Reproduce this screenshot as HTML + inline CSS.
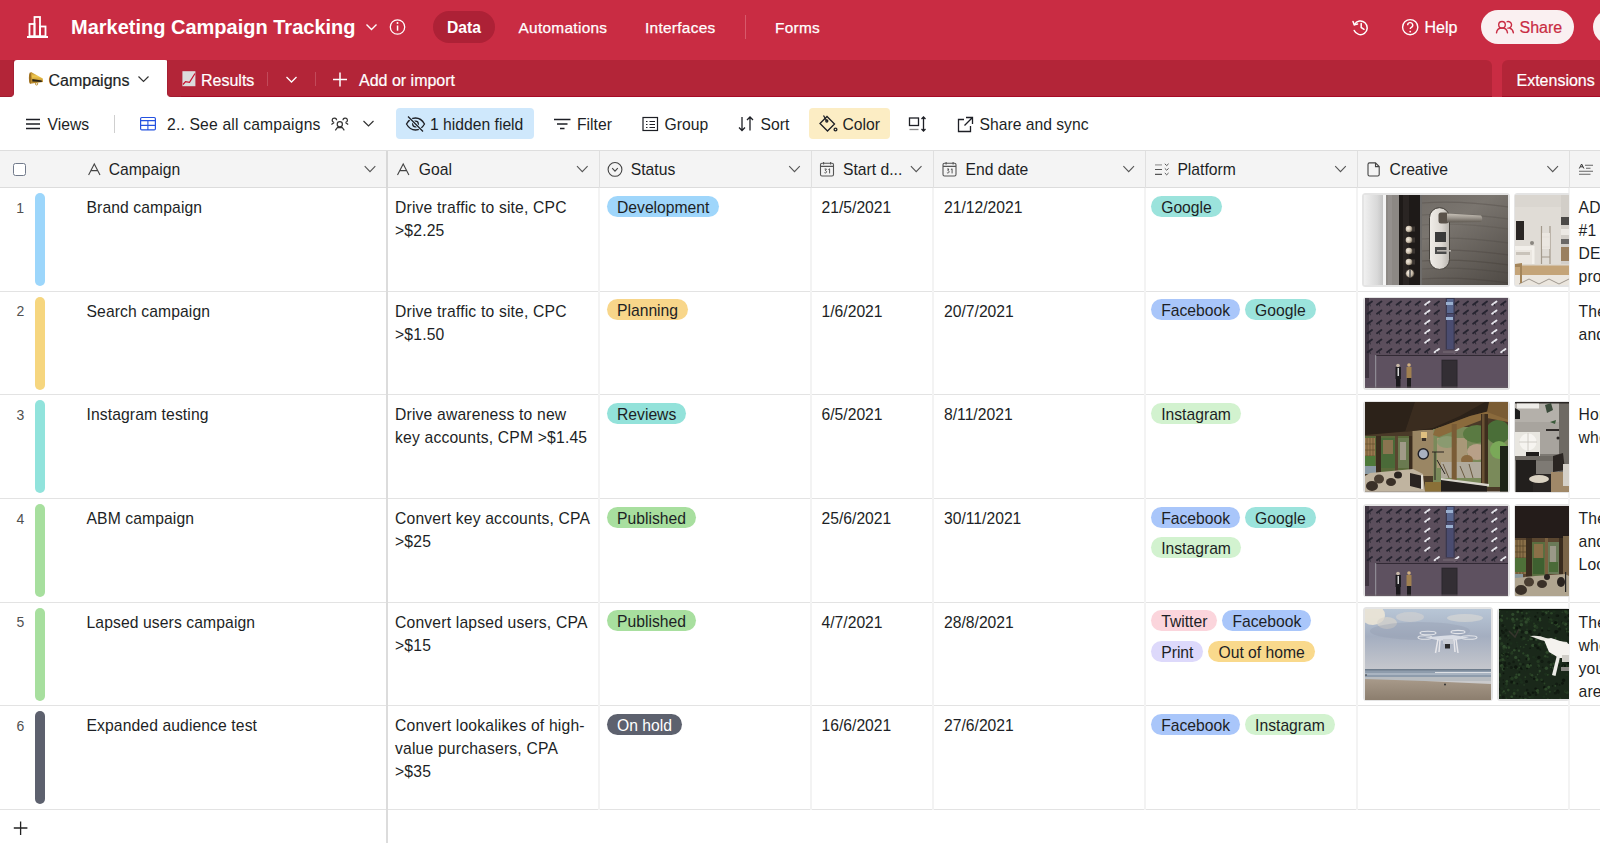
<!DOCTYPE html><html><head><meta charset="utf-8"><style>
*{margin:0;padding:0;box-sizing:border-box}
html,body{width:1600px;height:843px;overflow:hidden;background:#fff}
body{font-family:"Liberation Sans",sans-serif;color:#1d1f25;position:relative}
.t{position:absolute;white-space:nowrap}
.a{position:absolute}
svg{position:absolute;overflow:visible}
</style></head><body><div class="a" style="left:0;top:0;width:1600px;height:60px;background:#c92c43"></div><div class="a" style="left:0;top:60px;width:1600px;height:37px;background:#b32538;border-bottom:1px solid #a60a26"></div><div class="a" style="left:1492px;top:60px;width:10px;height:37px;background:#c92c43"></div><div class="a" style="left:1482px;top:60px;width:10px;height:10px;background:#c92c43"></div><div class="a" style="left:1482px;top:60px;width:10px;height:10px;background:#b32538;border-top-right-radius:6px"></div><div class="a" style="left:1502px;top:60px;width:10px;height:10px;background:#c92c43"></div><div class="a" style="left:1502px;top:60px;width:10px;height:10px;background:#b32538;border-top-left-radius:6px"></div><svg style="left:0;top:0" width="60" height="60"><g fill="none" stroke="#fff" stroke-width="1.8">
<rect x="29.5" y="24" width="5" height="12.2"/><rect x="34.5" y="17" width="5.5" height="19.2"/><rect x="40" y="26.5" width="5.5" height="9.7"/></g>
<rect x="27" y="36" width="21" height="2" fill="#fff"/></svg><div class="t" style="left:71px;top:15.57px;font-size:20px;line-height:23px;color:#fff;font-weight:bold;">Marketing Campaign Tracking</div><svg style="left:0;top:0" width="420" height="60"><polyline points="366.5,24.5 371.5,29.5 376.5,24.5" fill="none" stroke="#fff" stroke-width="1.4"/><circle cx="397.5" cy="27" r="7.2" fill="none" stroke="#fff" stroke-width="1.3"/><rect x="396.8" y="25.5" width="1.5" height="5.2" fill="#fff"/><circle cx="397.5" cy="23" r="1" fill="#fff"/></svg><div class="a" style="left:433px;top:11px;width:62px;height:32px;border-radius:16px;background:#ad2136"></div><div class="t" style="left:447px;top:15.76px;font-size:15.7px;line-height:23px;color:#fff;font-weight:bold;">Data</div><div class="t" style="left:518.5px;top:15.86px;font-size:15.4px;line-height:23px;color:#fff;-webkit-text-stroke:0.25px #fff;letter-spacing:0.3px;">Automations</div><div class="t" style="left:645px;top:15.86px;font-size:15.4px;line-height:23px;color:#fff;-webkit-text-stroke:0.25px #fff;letter-spacing:0.3px;">Interfaces</div><div class="a" style="left:745px;top:15px;width:1px;height:24px;background:#d8596b"></div><div class="t" style="left:775px;top:15.86px;font-size:15.4px;line-height:23px;color:#fff;-webkit-text-stroke:0.25px #fff;letter-spacing:0.3px;">Forms</div><svg style="left:0;top:0" width="1600" height="60"><g fill="none" stroke="#fff" stroke-width="1.5" stroke-linecap="round">
<path d="M1354.5,24.5 A6.8,6.8 0 1 1 1354.2,30.5"/><polyline points="1353,21.5 1354.3,24.8 1357.6,24"/><polyline points="1361.2,23.5 1361.2,27.5 1364,29.3"/></g>
<circle cx="1410.2" cy="27.2" r="7.6" fill="none" stroke="#fff" stroke-width="1.4"/>
<path d="M1407.7,25.2 a2.5,2.5 0 1 1 3.7,2.1 c-0.9,0.5 -1.2,1 -1.2,1.8" fill="none" stroke="#fff" stroke-width="1.4"/><circle cx="1410.2" cy="31.6" r="0.9" fill="#fff"/>
</svg><div class="t" style="left:1424.5px;top:16.36px;font-size:16px;line-height:23px;color:#fff;-webkit-text-stroke:0.2px #fff;">Help</div><div class="a" style="left:1481px;top:10px;width:93px;height:34px;border-radius:17px;background:#faf0f1"></div><svg style="left:0;top:0" width="1600" height="60"><g fill="none" stroke="#c92c43" stroke-width="1.4" stroke-linecap="round">
<circle cx="1502" cy="24.8" r="3.3"/><path d="M1496.5,32.8 c0.5,-3.5 2.6,-4.8 5.5,-4.8 s5,1.3 5.5,4.8"/>
<path d="M1507.2,21.7 a3.3,3.3 0 1 1 0.6,6.4"/><path d="M1510,28.4 c2,0.5 3,2 3.4,4.4"/></g></svg><div class="t" style="left:1519.5px;top:16.36px;font-size:16px;line-height:23px;color:#c92c43;-webkit-text-stroke:0.2px #c92c43;">Share</div><div class="a" style="left:1593px;top:10px;width:40px;height:34px;border-radius:17px;background:#faf0f1"></div><div class="a" style="left:14px;top:60px;width:154px;height:38px;background:#fff;border-radius:3px 3px 0 0"></div><div class="a" style="left:0;top:60px;width:14px;height:38px;background:#fff"></div><div class="a" style="left:0;top:60px;width:14px;height:37px;background:#b32538;border-bottom-right-radius:4px;border-bottom:1px solid #a01d31;border-right:1px solid #a51f33"></div><div class="a" style="left:167px;top:60px;width:14px;height:38px;background:#fff"></div><div class="a" style="left:167px;top:60px;width:14px;height:37px;background:#b32538;border-bottom-left-radius:4px;border-bottom:1px solid #a01d31;border-left:1px solid #a51f33"></div><svg style="left:0;top:60px" width="60" height="40">
<defs><linearGradient id="mg" x1="0" y1="0" x2="0" y2="1"><stop offset="0" stop-color="#b8862a"/><stop offset="0.35" stop-color="#f0c850"/><stop offset="1" stop-color="#b07e22"/></linearGradient></defs>
<path d="M31,12 L42.8,18.4 L43,22.1 L30,23.8 C28.6,20 28.8,15 31,12 Z" fill="url(#mg)"/>
<path d="M32.3,19 L41.8,20.4 L41.8,21.9 L32.3,21.6 Z" fill="#2a2418"/>
<ellipse cx="30.2" cy="18" rx="1.3" ry="5.8" fill="#a07020"/>
<circle cx="36.6" cy="23.9" r="1.15" fill="none" stroke="#b58a2a" stroke-width="0.9"/></svg><div class="t" style="left:48.5px;top:68.66px;font-size:16px;line-height:23px;-webkit-text-stroke:0.2px #1d1f25;">Campaigns</div><svg style="left:0;top:60px" width="200" height="40"><polyline points="138.5,16.5 143.5,21.5 148.5,16.5" fill="none" stroke="#333" stroke-width="1.2"/></svg><svg style="left:0;top:60px" width="400" height="40">
<rect x="182.4" y="11.2" width="13" height="15" fill="#dcdcdc"/>
<polyline points="183,24.5 185.5,21.6 189.5,22.4 195,13.5" fill="none" stroke="#c8102e" stroke-width="1.2"/></svg><div class="t" style="left:201px;top:68.66px;font-size:16px;line-height:23px;color:#fff;-webkit-text-stroke:0.2px #fff;">Results</div><div class="a" style="left:267px;top:72px;width:1px;height:14px;background:#c24a5a"></div><svg style="left:0;top:60px" width="400" height="40"><polyline points="286.5,17 291.5,22 296.5,17" fill="none" stroke="#fff" stroke-width="1.3"/></svg><div class="a" style="left:315px;top:72px;width:1px;height:14px;background:#c24a5a"></div><svg style="left:0;top:60px" width="400" height="40"><path d="M333,19.5 H347 M340,12.5 V26.5" stroke="#fff" stroke-width="1.5"/></svg><div class="t" style="left:359px;top:68.66px;font-size:16px;line-height:23px;color:#fff;-webkit-text-stroke:0.2px #fff;">Add or import</div><div class="t" style="left:1516.5px;top:68.66px;font-size:16px;line-height:23px;color:#fff;-webkit-text-stroke:0.2px #fff;">Extensions</div><div class="a" style="left:0;top:150px;width:1600px;height:1px;background:#dedede"></div><svg style="left:0;top:100px" width="1600" height="50" fill="none" stroke="#1d1f25" stroke-width="1.3">
<path d="M26,19.5 H40 M26,24 H40 M26,28.5 H40"/></svg><div class="t" style="left:47.5px;top:112.56px;font-size:15.7px;line-height:23px;">Views</div><div class="a" style="left:114px;top:115px;width:1px;height:18px;background:#cfcfcf"></div><svg style="left:0;top:100px" width="1600" height="50">
<rect x="140.6" y="17.5" width="14.8" height="12.4" rx="1.2" fill="none" stroke="#2552e0" stroke-width="1.2"/>
<path d="M140.6,20.6 H155.4 M140.6,25.4 H155.4 M147.9,20.6 V29.9" stroke="#2552e0" stroke-width="1.1"/></svg><div class="t" style="left:167px;top:112.56px;font-size:15.7px;line-height:23px;letter-spacing:0.17px;">2.. See all campaigns</div><svg style="left:0;top:100px" width="1600" height="50" fill="none" stroke="#333" stroke-width="1.2">
<circle cx="339.8" cy="24.3" r="2.6"/><path d="M337,27.6 H342.6 M337.3,27.6 L335.3,30.3 M342.3,27.6 L344.3,30.3"/>
<path d="M336.6,20.3 A2.2,2.2 0 1 0 334,22.4 M334.2,22.4 L331.4,24.5"/>
<path d="M343,20.3 A2.2,2.2 0 1 1 345.6,22.4 M345.4,22.4 L348.2,24.5"/>
<polyline points="363.5,21 368.5,26 373.5,21"/></svg><div class="a" style="left:396px;top:108px;width:138px;height:31px;border-radius:4px;background:#cfe8fc"></div><svg style="left:0;top:100px" width="1600" height="50" fill="none" stroke="#1d1f25" stroke-width="1.3">
<path d="M406.5,24 C409,19.5 412,18 415.5,18 S422,19.5 424.5,24 C422,28.5 419,30 415.5,30 S409,28.5 406.5,24 Z"/>
<circle cx="415.5" cy="24" r="2.8"/><path d="M408,16.5 L423,31.5" stroke="#cfe8fc" stroke-width="3"/><path d="M408,16.5 L423,31.5"/></svg><div class="t" style="left:430px;top:112.56px;font-size:15.7px;line-height:23px;">1 hidden field</div><svg style="left:0;top:100px" width="1600" height="50" fill="none" stroke="#1d1f25" stroke-width="1.3">
<path d="M554,19.5 H570.5 M557,24 H567.5 M560,28.5 H564.5"/></svg><div class="t" style="left:577px;top:112.56px;font-size:15.7px;line-height:23px;">Filter</div><svg style="left:0;top:100px" width="1600" height="50" fill="none" stroke="#1d1f25" stroke-width="1.2">
<rect x="643" y="17.5" width="14.5" height="13"/><path d="M646,21.5 H647.5 M649.5,21.5 H655 M646,24.5 H647.5 M649.5,24.5 H655 M646,27.5 H647.5 M649.5,27.5 H655"/></svg><div class="t" style="left:664.5px;top:112.56px;font-size:15.7px;line-height:23px;">Group</div><svg style="left:0;top:100px" width="1600" height="50" fill="none" stroke="#1d1f25" stroke-width="1.3">
<path d="M742,17 V30.5 M739,27.5 L742,30.5 L745,27.5 M750,30.5 V17 M747,20 L750,17 L753,20"/></svg><div class="t" style="left:760.5px;top:112.56px;font-size:15.7px;line-height:23px;">Sort</div><div class="a" style="left:809px;top:108px;width:80.5px;height:31px;border-radius:4px;background:#fcedc4"></div><svg style="left:0;top:100px" width="1600" height="50" fill="none" stroke="#1d1f25" stroke-width="1.3">
<path d="M820,23.5 L827,16.5 L834.5,24 L827.5,31 Z"/><path d="M823.5,15.5 L826.5,20.5"/><circle cx="826.8" cy="21" r="1"/><circle cx="835.5" cy="29.5" r="1.4"/></svg><div class="t" style="left:842.5px;top:112.56px;font-size:15.7px;line-height:23px;">Color</div><svg style="left:0;top:100px" width="1600" height="50" fill="none" stroke="#1d1f25" stroke-width="1.3">
<rect x="909.5" y="18" width="9" height="7.5"/><path d="M909.5,29.5 H918.5" stroke="#888"/><path d="M923.5,17 V31 M921.5,19 L923.5,17 L925.5,19 M921.5,29 L923.5,31 L925.5,29"/></svg><svg style="left:0;top:100px" width="1600" height="50" fill="none" stroke="#1d1f25" stroke-width="1.3">
<path d="M964,19.5 H958.5 V31.5 H970.5 V26"/><path d="M966,17.5 H972.5 V24 M972.5,17.5 L964.5,25.5"/></svg><div class="t" style="left:979.5px;top:112.56px;font-size:15.7px;line-height:23px;">Share and sync</div><div class="a" style="left:0;top:151px;width:1600px;height:36.5px;background:#f4f4f4;border-bottom:1px solid #dcdcdc"></div><div class="a" style="left:386px;top:151px;width:2px;height:37px;background:#d8d8d8"></div><div class="a" style="left:599px;top:151px;width:1px;height:37px;background:#e0e0e0"></div><div class="a" style="left:811px;top:151px;width:1px;height:37px;background:#e0e0e0"></div><div class="a" style="left:933px;top:151px;width:1px;height:37px;background:#e0e0e0"></div><div class="a" style="left:1145px;top:151px;width:1px;height:37px;background:#e0e0e0"></div><div class="a" style="left:1357px;top:151px;width:1px;height:37px;background:#e0e0e0"></div><div class="a" style="left:1569px;top:151px;width:1px;height:37px;background:#e0e0e0"></div><div class="a" style="left:13px;top:163px;width:13px;height:13px;border:1.2px solid #717a8b;border-radius:2.5px;background:#fff"></div><svg style="left:0;top:0" width="1600" height="200"><path d="M88.6,175 L94.3,164 L100.0,175 M90.89999999999999,170.6 H97.7" fill="none" stroke="#444" stroke-width="1.1"/><polyline points="364.7,166.2 370,171.6 375.3,166.2" fill="none" stroke="#555" stroke-width="1.1"/><path d="M397.5,175 L403.2,164 L408.9,175 M399.8,170.6 H406.59999999999997" fill="none" stroke="#444" stroke-width="1.1"/><polyline points="577.0,166.2 582.3,171.6 587.5999999999999,166.2" fill="none" stroke="#555" stroke-width="1.1"/><circle cx="615" cy="169.4" r="6.9" fill="none" stroke="#444" stroke-width="1.1"/><polyline points="612.2,168.1 615,171.2 617.8,168.1" fill="none" stroke="#444" stroke-width="1.1"/><polyline points="789.2,166.2 794.5,171.6 799.8,166.2" fill="none" stroke="#555" stroke-width="1.1"/><rect x="820.5" y="163.2" width="13" height="12.8" rx="1.5" fill="none" stroke="#555" stroke-width="1.1"/><path d="M820.5,166.4 H833.5 M823.6,162 V164.5 M830.6,162 V164.5" stroke="#555" stroke-width="1.1"/><path d="M824.6,169 h1.8 l-1,1.6 a1.2,1.2 0 1 1 -1,1.9 M828.4,169.6 l1.2,-0.8 v4.6" fill="none" stroke="#444" stroke-width="0.9"/><polyline points="910.9000000000001,166.2 916.2,171.6 921.5,166.2" fill="none" stroke="#555" stroke-width="1.1"/><rect x="943.0" y="163.2" width="13" height="12.8" rx="1.5" fill="none" stroke="#555" stroke-width="1.1"/><path d="M943.0,166.4 H956.0 M946.1,162 V164.5 M953.1,162 V164.5" stroke="#555" stroke-width="1.1"/><path d="M947.1,169 h1.8 l-1,1.6 a1.2,1.2 0 1 1 -1,1.9 M950.9,169.6 l1.2,-0.8 v4.6" fill="none" stroke="#444" stroke-width="0.9"/><polyline points="1123.4,166.2 1128.7,171.6 1134.0,166.2" fill="none" stroke="#555" stroke-width="1.1"/><path d="M1155,164.9 H1162" stroke="#999" stroke-width="1.2"/><path d="M1155,169.5 H1162 M1155,174.3 H1162" stroke="#555" stroke-width="1.2"/><polyline points="1164.8,163.8 1166.7,165.6 1168.6,163.8" fill="none" stroke="#555" stroke-width="1"/><polyline points="1164.8,168.4 1166.7,170.2 1168.6,168.4" fill="none" stroke="#555" stroke-width="1"/><polyline points="1164.8,173 1166.7,174.8 1168.6,173" fill="none" stroke="#555" stroke-width="1"/><polyline points="1335.2,166.2 1340.5,171.6 1345.8,166.2" fill="none" stroke="#555" stroke-width="1.1"/><path d="M1369.5,162.9 H1375.5 L1379.2,166.6 V174.5 a1.5,1.5 0 0 1 -1.5,1.5 H1369.5 a1.5,1.5 0 0 1 -1.5,-1.5 V164.4 a1.5,1.5 0 0 1 1.5,-1.5 Z M1375.5,162.9 V166.6 H1379.2" fill="none" stroke="#444" stroke-width="1.1"/><polyline points="1547.4,166.2 1552.7,171.6 1558.0,166.2" fill="none" stroke="#555" stroke-width="1.1"/><path d="M1585,165.3 H1593 M1586,168.3 H1590.5 M1579,171.3 H1593 M1579,174.3 H1590.5" stroke="#666" stroke-width="1.1"/><path d="M1579.3,168.5 L1581.6,164 L1583.9,168.5 M1580.3,166.8 H1583" fill="none" stroke="#333" stroke-width="1"/></svg><div class="t" style="left:108.75px;top:158.06px;font-size:15.7px;line-height:23px;">Campaign</div><div class="t" style="left:418.75px;top:158.06px;font-size:15.7px;line-height:23px;">Goal</div><div class="t" style="left:630.75px;top:158.06px;font-size:15.7px;line-height:23px;">Status</div><div class="t" style="left:843px;top:158.06px;font-size:15.7px;line-height:23px;">Start d...</div><div class="t" style="left:965.5px;top:158.06px;font-size:15.7px;line-height:23px;">End date</div><div class="t" style="left:1177.4px;top:158.06px;font-size:15.7px;line-height:23px;">Platform</div><div class="t" style="left:1389.6px;top:158.06px;font-size:15.7px;line-height:23px;">Creative</div><div class="a" style="left:0;top:290.67px;width:1600px;height:1px;background:#e3e3e3"></div><div class="t" style="left:16.3px;top:196.75px;font-size:14px;line-height:23px;color:#505050;">1</div><div class="a" style="left:35.2px;top:193.10px;width:9.7px;height:92.87px;border-radius:5px;background:#9cd6fb"></div><div class="t" style="left:86.5px;top:195.96px;font-size:15.7px;line-height:23px;letter-spacing:0.1px;">Brand campaign</div><div class="t" style="left:395px;top:195.96px;font-size:15.7px;line-height:23px;letter-spacing:0.18px;">Drive traffic to site, CPC</div><div class="t" style="left:395px;top:218.96px;font-size:15.7px;line-height:23px;letter-spacing:0.18px;">&gt;$2.25</div><div class="t" style="left:607px;top:195.80px;height:21px;line-height:23px;padding:0 10px;border-radius:10.5px;background:#9fd6fb;color:#1d1f25;font-size:15.7px">Development</div><div class="t" style="left:821.5px;top:195.96px;font-size:15.7px;line-height:23px;">21/5/2021</div><div class="t" style="left:944px;top:195.96px;font-size:15.7px;line-height:23px;">21/12/2021</div><div class="t" style="left:1151.2px;top:195.80px;font-size:15.7px;display:flex"><div style="height:21px;line-height:23px;padding:0 10px;border-radius:10.5px;background:#9be3dc;margin-right:5px">Google</div></div><div class="t" style="left:1578.5px;top:195.96px;font-size:15.7px;line-height:23px;letter-spacing:0.2px;">ADVANCED</div><div class="t" style="left:1578.5px;top:218.96px;font-size:15.7px;line-height:23px;letter-spacing:0.2px;">#1 IN</div><div class="t" style="left:1578.5px;top:241.96px;font-size:15.7px;line-height:23px;letter-spacing:0.2px;">DESIGN</div><div class="t" style="left:1578.5px;top:264.96px;font-size:15.7px;line-height:23px;letter-spacing:0.2px;">protection</div><div class="a" style="left:0;top:394.33px;width:1600px;height:1px;background:#e3e3e3"></div><div class="t" style="left:16.5px;top:300.42px;font-size:14px;line-height:23px;color:#505050;">2</div><div class="a" style="left:35.2px;top:296.77px;width:9.7px;height:92.87px;border-radius:5px;background:#f6d67f"></div><div class="t" style="left:86.5px;top:299.63px;font-size:15.7px;line-height:23px;letter-spacing:0.1px;">Search campaign</div><div class="t" style="left:395px;top:299.63px;font-size:15.7px;line-height:23px;letter-spacing:0.18px;">Drive traffic to site, CPC</div><div class="t" style="left:395px;top:322.63px;font-size:15.7px;line-height:23px;letter-spacing:0.18px;">&gt;$1.50</div><div class="t" style="left:607px;top:299.47px;height:21px;line-height:23px;padding:0 10px;border-radius:10.5px;background:#f8d68a;color:#1d1f25;font-size:15.7px">Planning</div><div class="t" style="left:821.5px;top:299.63px;font-size:15.7px;line-height:23px;">1/6/2021</div><div class="t" style="left:944px;top:299.63px;font-size:15.7px;line-height:23px;">20/7/2021</div><div class="t" style="left:1151.2px;top:299.47px;font-size:15.7px;display:flex"><div style="height:21px;line-height:23px;padding:0 10px;border-radius:10.5px;background:#a9c6fa;margin-right:5px">Facebook</div><div style="height:21px;line-height:23px;padding:0 10px;border-radius:10.5px;background:#9be3dc;margin-right:5px">Google</div></div><div class="t" style="left:1578.5px;top:299.63px;font-size:15.7px;line-height:23px;letter-spacing:0.2px;">The</div><div class="t" style="left:1578.5px;top:322.63px;font-size:15.7px;line-height:23px;letter-spacing:0.2px;">and</div><div class="a" style="left:0;top:498.00px;width:1600px;height:1px;background:#e3e3e3"></div><div class="t" style="left:16.5px;top:404.08px;font-size:14px;line-height:23px;color:#505050;">3</div><div class="a" style="left:35.2px;top:400.43px;width:9.7px;height:92.87px;border-radius:5px;background:#91e3dc"></div><div class="t" style="left:86.5px;top:403.29px;font-size:15.7px;line-height:23px;letter-spacing:0.1px;">Instagram testing</div><div class="t" style="left:395px;top:403.29px;font-size:15.7px;line-height:23px;letter-spacing:0.18px;">Drive awareness to new</div><div class="t" style="left:395px;top:426.29px;font-size:15.7px;line-height:23px;letter-spacing:0.18px;">key accounts, CPM &gt;$1.45</div><div class="t" style="left:607px;top:403.13px;height:21px;line-height:23px;padding:0 10px;border-radius:10.5px;background:#93e2da;color:#1d1f25;font-size:15.7px">Reviews</div><div class="t" style="left:821.5px;top:403.29px;font-size:15.7px;line-height:23px;">6/5/2021</div><div class="t" style="left:944px;top:403.29px;font-size:15.7px;line-height:23px;">8/11/2021</div><div class="t" style="left:1151.2px;top:403.13px;font-size:15.7px;display:flex"><div style="height:21px;line-height:23px;padding:0 10px;border-radius:10.5px;background:#d2f2cf;margin-right:5px">Instagram</div></div><div class="t" style="left:1578.5px;top:403.29px;font-size:15.7px;line-height:23px;letter-spacing:0.2px;">Hon</div><div class="t" style="left:1578.5px;top:426.29px;font-size:15.7px;line-height:23px;letter-spacing:0.2px;">whe</div><div class="a" style="left:0;top:601.67px;width:1600px;height:1px;background:#e3e3e3"></div><div class="t" style="left:16.5px;top:507.75px;font-size:14px;line-height:23px;color:#505050;">4</div><div class="a" style="left:35.2px;top:504.10px;width:9.7px;height:92.87px;border-radius:5px;background:#a7df9e"></div><div class="t" style="left:86.5px;top:506.96px;font-size:15.7px;line-height:23px;letter-spacing:0.1px;">ABM campaign</div><div class="t" style="left:395px;top:506.96px;font-size:15.7px;line-height:23px;letter-spacing:0.18px;">Convert key accounts, CPA</div><div class="t" style="left:395px;top:529.96px;font-size:15.7px;line-height:23px;letter-spacing:0.18px;">&gt;$25</div><div class="t" style="left:607px;top:506.80px;height:21px;line-height:23px;padding:0 10px;border-radius:10.5px;background:#a8df9f;color:#1d1f25;font-size:15.7px">Published</div><div class="t" style="left:821.5px;top:506.96px;font-size:15.7px;line-height:23px;">25/6/2021</div><div class="t" style="left:944px;top:506.96px;font-size:15.7px;line-height:23px;">30/11/2021</div><div class="t" style="left:1151.2px;top:506.80px;font-size:15.7px;display:flex"><div style="height:21px;line-height:23px;padding:0 10px;border-radius:10.5px;background:#a9c6fa;margin-right:5px">Facebook</div><div style="height:21px;line-height:23px;padding:0 10px;border-radius:10.5px;background:#9be3dc;margin-right:5px">Google</div></div><div class="t" style="left:1151.2px;top:537.30px;font-size:15.7px;display:flex"><div style="height:21px;line-height:23px;padding:0 10px;border-radius:10.5px;background:#d2f2cf;margin-right:5px">Instagram</div></div><div class="t" style="left:1578.5px;top:506.96px;font-size:15.7px;line-height:23px;letter-spacing:0.2px;">The</div><div class="t" style="left:1578.5px;top:529.96px;font-size:15.7px;line-height:23px;letter-spacing:0.2px;">and</div><div class="t" style="left:1578.5px;top:552.96px;font-size:15.7px;line-height:23px;letter-spacing:0.2px;">Loo</div><div class="a" style="left:0;top:705.34px;width:1600px;height:1px;background:#e3e3e3"></div><div class="t" style="left:16.5px;top:611.42px;font-size:14px;line-height:23px;color:#505050;">5</div><div class="a" style="left:35.2px;top:607.77px;width:9.7px;height:92.87px;border-radius:5px;background:#a7df9e"></div><div class="t" style="left:86.5px;top:610.63px;font-size:15.7px;line-height:23px;letter-spacing:0.1px;">Lapsed users campaign</div><div class="t" style="left:395px;top:610.63px;font-size:15.7px;line-height:23px;letter-spacing:0.18px;">Convert lapsed users, CPA</div><div class="t" style="left:395px;top:633.63px;font-size:15.7px;line-height:23px;letter-spacing:0.18px;">&gt;$15</div><div class="t" style="left:607px;top:610.47px;height:21px;line-height:23px;padding:0 10px;border-radius:10.5px;background:#a8df9f;color:#1d1f25;font-size:15.7px">Published</div><div class="t" style="left:821.5px;top:610.63px;font-size:15.7px;line-height:23px;">4/7/2021</div><div class="t" style="left:944px;top:610.63px;font-size:15.7px;line-height:23px;">28/8/2021</div><div class="t" style="left:1151.2px;top:610.47px;font-size:15.7px;display:flex"><div style="height:21px;line-height:23px;padding:0 10px;border-radius:10.5px;background:#fbd5dc;margin-right:5px">Twitter</div><div style="height:21px;line-height:23px;padding:0 10px;border-radius:10.5px;background:#a9c6fa;margin-right:5px">Facebook</div></div><div class="t" style="left:1151.2px;top:640.97px;font-size:15.7px;display:flex"><div style="height:21px;line-height:23px;padding:0 10px;border-radius:10.5px;background:#ddd9fb;margin-right:5px">Print</div><div style="height:21px;line-height:23px;padding:0 10px;border-radius:10.5px;background:#f9d98c;margin-right:5px">Out of home</div></div><div class="t" style="left:1578.5px;top:610.63px;font-size:15.7px;line-height:23px;letter-spacing:0.2px;">The</div><div class="t" style="left:1578.5px;top:633.63px;font-size:15.7px;line-height:23px;letter-spacing:0.2px;">whe</div><div class="t" style="left:1578.5px;top:656.63px;font-size:15.7px;line-height:23px;letter-spacing:0.2px;">you</div><div class="t" style="left:1578.5px;top:679.63px;font-size:15.7px;line-height:23px;letter-spacing:0.2px;">are</div><div class="a" style="left:0;top:809.00px;width:1600px;height:1px;background:#e3e3e3"></div><div class="t" style="left:16.5px;top:715.08px;font-size:14px;line-height:23px;color:#505050;">6</div><div class="a" style="left:35.2px;top:711.44px;width:9.7px;height:92.87px;border-radius:5px;background:#5d616e"></div><div class="t" style="left:86.5px;top:714.29px;font-size:15.7px;line-height:23px;letter-spacing:0.1px;">Expanded audience test</div><div class="t" style="left:395px;top:714.29px;font-size:15.7px;line-height:23px;letter-spacing:0.18px;">Convert lookalikes of high-</div><div class="t" style="left:395px;top:737.29px;font-size:15.7px;line-height:23px;letter-spacing:0.18px;">value purchasers, CPA</div><div class="t" style="left:395px;top:760.29px;font-size:15.7px;line-height:23px;letter-spacing:0.18px;">&gt;$35</div><div class="t" style="left:607px;top:714.13px;height:21px;line-height:23px;padding:0 10px;border-radius:10.5px;background:#5d616e;color:#fff;font-size:15.7px">On hold</div><div class="t" style="left:821.5px;top:714.29px;font-size:15.7px;line-height:23px;">16/6/2021</div><div class="t" style="left:944px;top:714.29px;font-size:15.7px;line-height:23px;">27/6/2021</div><div class="t" style="left:1151.2px;top:714.13px;font-size:15.7px;display:flex"><div style="height:21px;line-height:23px;padding:0 10px;border-radius:10.5px;background:#a9c6fa;margin-right:5px">Facebook</div><div style="height:21px;line-height:23px;padding:0 10px;border-radius:10.5px;background:#d2f2cf;margin-right:5px">Instagram</div></div><div class="a" style="left:386px;top:188px;width:2px;height:655px;background:#dcdcdc"></div><div class="a" style="left:598px;top:188px;width:2px;height:621.50px;background:#f3f3f3"></div><div class="a" style="left:810px;top:188px;width:2px;height:621.50px;background:#f3f3f3"></div><div class="a" style="left:932px;top:188px;width:2px;height:621.50px;background:#f3f3f3"></div><div class="a" style="left:1144px;top:188px;width:2px;height:621.50px;background:#f3f3f3"></div><div class="a" style="left:1356px;top:188px;width:2px;height:621.50px;background:#f3f3f3"></div><div class="a" style="left:1568px;top:188px;width:2px;height:621.50px;background:#f3f3f3"></div><div class="a" style="left:0;top:0;width:1569px;height:843px;overflow:hidden"><div class="a" style="left:1362.00px;top:193.00px;width:147.50px;height:93.50px;border-radius:3.5px;background:#e4e4e4"></div><svg style="left:1363.50px;top:194.50px;overflow:hidden" width="144.50" height="90.50" viewBox="0 0 144.50 90.50" preserveAspectRatio="none"><defs><linearGradient id="dg1" x1="0" x2="1"><stop offset="0" stop-color="#f0f0f0"/><stop offset="0.7" stop-color="#d8d8d8"/><stop offset="1" stop-color="#c4c4c4"/></linearGradient><linearGradient id="dg2" x1="0" y1="0" x2="1" y2="1"><stop offset="0" stop-color="#6a6560"/><stop offset="0.45" stop-color="#7a756f"/><stop offset="1" stop-color="#4e4944"/></linearGradient><radialGradient id="bolt" cx="0.35" cy="0.4" r="0.7"><stop offset="0" stop-color="#f4ece0"/><stop offset="0.6" stop-color="#c8bcaa"/><stop offset="1" stop-color="#6a6050"/></radialGradient><linearGradient id="plate" x1="0" x2="1"><stop offset="0" stop-color="#f0ede8"/><stop offset="0.6" stop-color="#dcd8d2"/><stop offset="1" stop-color="#b8b4ae"/></linearGradient><linearGradient id="lever" x1="0" y1="0" x2="0" y2="1"><stop offset="0" stop-color="#c8c2b8"/><stop offset="0.5" stop-color="#9a948c"/><stop offset="1" stop-color="#5e5850"/></linearGradient></defs><rect x="0" y="0" width="144.5" height="90.5" fill="url(#dg2)"/><rect x="0" y="0" width="19" height="90.5" fill="url(#dg1)"/><rect x="19" y="0" width="3" height="90.5" fill="#f4f4f4"/><rect x="22" y="0" width="13" height="90.5" fill="#8c8884"/><rect x="24" y="0" width="4" height="90.5" fill="#9a9692" opacity="0.6"/><rect x="35" y="0" width="21" height="90.5" fill="#1e1a18"/><rect x="39" y="0" width="6" height="90.5" fill="#2a2523"/><rect x="56" y="0" width="2" height="90.5" fill="#6e6c6a"/><path d="M58,8 Q95,5 144.5,12" stroke="#3a3530" stroke-width="1.2" fill="none" opacity="0.25"/><path d="M58,20 Q95,17 144.5,24" stroke="#3a3530" stroke-width="1.2" fill="none" opacity="0.2"/><path d="M58,30 Q95,27 144.5,34" stroke="#3a3530" stroke-width="1.2" fill="none" opacity="0.15"/><path d="M58,44 Q95,41 144.5,48" stroke="#3a3530" stroke-width="1.2" fill="none" opacity="0.2"/><path d="M58,56 Q95,53 144.5,60" stroke="#3a3530" stroke-width="1.2" fill="none" opacity="0.25"/><path d="M58,66 Q95,63 144.5,70" stroke="#3a3530" stroke-width="1.2" fill="none" opacity="0.3"/><path d="M58,74 Q95,71 144.5,78" stroke="#3a3530" stroke-width="1.2" fill="none" opacity="0.2"/><path d="M58,84 Q95,81 144.5,88" stroke="#3a3530" stroke-width="1.2" fill="none" opacity="0.25"/><rect x="45" y="31.5" width="6" height="5" fill="#3a3430"/><circle cx="45" cy="34" r="3.3" fill="url(#bolt)"/><rect x="45" y="42.5" width="6" height="5" fill="#3a3430"/><circle cx="45" cy="45" r="3.3" fill="url(#bolt)"/><rect x="45" y="53.5" width="6" height="5" fill="#3a3430"/><circle cx="45" cy="56" r="3.3" fill="url(#bolt)"/><rect x="45" y="64.5" width="6" height="5" fill="#3a3430"/><circle cx="45" cy="67" r="3.3" fill="url(#bolt)"/><circle cx="46" cy="78.5" r="4.3" fill="url(#bolt)" stroke="#2a2420" stroke-width="0.6"/><rect x="45.2" y="74.8" width="1.6" height="7.5" fill="#555"/><rect x="65.5" y="12.7" width="20" height="61.7" rx="10" fill="url(#plate)" stroke="#3a3530" stroke-width="0.9"/><rect x="71" y="37" width="11" height="10" fill="#3a3a3a"/><rect x="71" y="52" width="11.5" height="7" fill="#4a4a4a"/><rect x="73" y="55" width="14" height="1.6" fill="#b8b4ae"/><rect x="74.5" y="17.5" width="10" height="11" rx="2.5" fill="#5a524a"/><path d="M83,18.5 L117,20.5 Q119.5,23.5 117,27 L83,27.5 Z" fill="url(#lever)"/></svg><div class="a" style="left:1513.50px;top:193.00px;width:57.00px;height:93.50px;border-radius:3.5px;background:#e4e4e4"></div><svg style="left:1515.00px;top:194.50px;overflow:hidden" width="54.00" height="90.50" viewBox="0 0 54.00 90.50" preserveAspectRatio="none"><rect width="54" height="90.5" fill="#e0dcd6"/><rect x="0" y="0" width="54" height="12" fill="#dad6d0"/><rect x="46" y="0" width="8" height="72" fill="#d2cec8"/><rect x="46" y="22" width="8" height="8" fill="#4a4846"/><rect x="46" y="34" width="8" height="6" fill="#ece9e4"/><rect x="46" y="44" width="8" height="5" fill="#6a6866"/><rect x="46" y="52" width="8" height="14" fill="#9a8060"/><rect x="1" y="26" width="8" height="19" fill="#2a2624"/><rect x="0" y="51" width="19" height="4" fill="#f2efea"/><rect x="0" y="55" width="18" height="14" fill="#ebe7e1"/><rect x="1" y="57" width="14" height="3" fill="#c9c3ba"/><rect x="17" y="51" width="2.5" height="28" fill="#f4f1ec"/><circle cx="17" cy="48" r="2" fill="#8a8680"/><path d="M26.5,31 V76 M35,31 V76 M26.5,42 H35 M26.5,52 H35 M26.5,62 H35 M26.5,71 H35" stroke="#a39a8c" stroke-width="1.2"/><rect x="27" y="38" width="8" height="16" fill="#ece8e2" opacity="0.9"/><rect x="0" y="70" width="54" height="11" fill="#c4a478"/><rect x="0" y="69" width="54" height="1.5" fill="#ddd8cf"/><rect x="0" y="80" width="54" height="10.5" fill="#ebe6de"/><path d="M4,89 L14,84 L24,89 L34,84 L44,89 L54,84" stroke="#7e766c" stroke-width="0.7" fill="none"/><path d="M0,69 L7,68 L7,88 L5,88 L5,72 L0,72 Z" fill="#a4855a"/></svg><div class="a" style="left:1363.00px;top:296.70px;width:146.50px;height:93.30px;border-radius:3.5px;background:#e4e4e4"></div><svg style="left:1364.50px;top:298.20px;overflow:hidden" width="143.50" height="90.30" viewBox="0 0 143.50 90.30" preserveAspectRatio="none"><rect width="143.5" height="90.5" fill="#5e5160"/><rect x="0" y="0" width="143.5" height="57" fill="#5b4e5c"/><rect x="0" y="0" width="4" height="80" fill="#3e3440"/><path d="M2.6,6.8 L7,3.5" stroke="#262430" stroke-width="1.9" stroke-linecap="round"/><path d="M4.7,5.8 L5.4,8.3" stroke="#2a2832" stroke-width="0.9"/><path d="M2.6,15.7 L7,12.399999999999999" stroke="#262430" stroke-width="1.9" stroke-linecap="round"/><path d="M4.7,14.7 L5.4,17.2" stroke="#2a2832" stroke-width="0.9"/><path d="M2.6,25.8 L7,22.5" stroke="#262430" stroke-width="1.9" stroke-linecap="round"/><path d="M4.7,24.8 L5.4,27.3" stroke="#2a2832" stroke-width="0.9"/><path d="M2.6,35.3 L7,31.999999999999996" stroke="#262430" stroke-width="1.9" stroke-linecap="round"/><path d="M4.7,34.3 L5.4,36.8" stroke="#2a2832" stroke-width="0.9"/><path d="M2.6,44.8 L7,41.5" stroke="#262430" stroke-width="1.9" stroke-linecap="round"/><path d="M4.7,43.8 L5.4,46.3" stroke="#2a2832" stroke-width="0.9"/><path d="M2.6,54.3 L7,51.0" stroke="#262430" stroke-width="1.9" stroke-linecap="round"/><path d="M4.7,53.3 L5.4,55.8" stroke="#2a2832" stroke-width="0.9"/><path d="M12.0,6.8 L16.4,3.5" stroke="#262430" stroke-width="1.9" stroke-linecap="round"/><path d="M14.1,5.8 L14.8,8.3" stroke="#2a2832" stroke-width="0.9"/><path d="M12.0,15.7 L16.4,12.399999999999999" stroke="#262430" stroke-width="1.9" stroke-linecap="round"/><path d="M14.1,14.7 L14.8,17.2" stroke="#2a2832" stroke-width="0.9"/><path d="M12.0,25.8 L16.4,22.5" stroke="#262430" stroke-width="1.9" stroke-linecap="round"/><path d="M14.1,24.8 L14.8,27.3" stroke="#2a2832" stroke-width="0.9"/><path d="M12.0,35.3 L16.4,31.999999999999996" stroke="#262430" stroke-width="1.9" stroke-linecap="round"/><path d="M14.1,34.3 L14.8,36.8" stroke="#2a2832" stroke-width="0.9"/><path d="M12.0,44.8 L16.4,41.5" stroke="#262430" stroke-width="1.9" stroke-linecap="round"/><path d="M14.1,43.8 L14.8,46.3" stroke="#2a2832" stroke-width="0.9"/><path d="M12.0,54.3 L16.4,51.0" stroke="#262430" stroke-width="1.9" stroke-linecap="round"/><path d="M14.1,53.3 L14.8,55.8" stroke="#2a2832" stroke-width="0.9"/><path d="M22.1,6.8 L26.5,3.5" stroke="#262430" stroke-width="1.9" stroke-linecap="round"/><path d="M24.2,5.8 L24.9,8.3" stroke="#2a2832" stroke-width="0.9"/><path d="M22.1,15.7 L26.5,12.399999999999999" stroke="#262430" stroke-width="1.9" stroke-linecap="round"/><path d="M24.2,14.7 L24.9,17.2" stroke="#2a2832" stroke-width="0.9"/><path d="M22.1,25.8 L26.5,22.5" stroke="#262430" stroke-width="1.9" stroke-linecap="round"/><path d="M24.2,24.8 L24.9,27.3" stroke="#2a2832" stroke-width="0.9"/><path d="M22.1,35.3 L26.5,31.999999999999996" stroke="#262430" stroke-width="1.9" stroke-linecap="round"/><path d="M24.2,34.3 L24.9,36.8" stroke="#2a2832" stroke-width="0.9"/><path d="M22.1,44.8 L26.5,41.5" stroke="#262430" stroke-width="1.9" stroke-linecap="round"/><path d="M24.2,43.8 L24.9,46.3" stroke="#2a2832" stroke-width="0.9"/><path d="M22.1,54.3 L26.5,51.0" stroke="#262430" stroke-width="1.9" stroke-linecap="round"/><path d="M24.2,53.3 L24.9,55.8" stroke="#2a2832" stroke-width="0.9"/><path d="M31.6,6.8 L36,3.5" stroke="#262430" stroke-width="1.9" stroke-linecap="round"/><path d="M33.7,5.8 L34.4,8.3" stroke="#2a2832" stroke-width="0.9"/><path d="M31.6,15.7 L36,12.399999999999999" stroke="#262430" stroke-width="1.9" stroke-linecap="round"/><path d="M33.7,14.7 L34.4,17.2" stroke="#2a2832" stroke-width="0.9"/><path d="M31.6,25.8 L36,22.5" stroke="#262430" stroke-width="1.9" stroke-linecap="round"/><path d="M33.7,24.8 L34.4,27.3" stroke="#2a2832" stroke-width="0.9"/><path d="M31.6,35.3 L36,31.999999999999996" stroke="#262430" stroke-width="1.9" stroke-linecap="round"/><path d="M33.7,34.3 L34.4,36.8" stroke="#2a2832" stroke-width="0.9"/><path d="M31.6,44.8 L36,41.5" stroke="#262430" stroke-width="1.9" stroke-linecap="round"/><path d="M33.7,43.8 L34.4,46.3" stroke="#2a2832" stroke-width="0.9"/><path d="M31.6,54.3 L36,51.0" stroke="#262430" stroke-width="1.9" stroke-linecap="round"/><path d="M33.7,53.3 L34.4,55.8" stroke="#2a2832" stroke-width="0.9"/><path d="M41.1,6.8 L45.5,3.5" stroke="#262430" stroke-width="1.9" stroke-linecap="round"/><path d="M43.2,5.8 L43.9,8.3" stroke="#2a2832" stroke-width="0.9"/><path d="M41.1,15.7 L45.5,12.399999999999999" stroke="#262430" stroke-width="1.9" stroke-linecap="round"/><path d="M43.2,14.7 L43.9,17.2" stroke="#2a2832" stroke-width="0.9"/><path d="M41.1,25.8 L45.5,22.5" stroke="#262430" stroke-width="1.9" stroke-linecap="round"/><path d="M43.2,24.8 L43.9,27.3" stroke="#2a2832" stroke-width="0.9"/><path d="M41.1,35.3 L45.5,31.999999999999996" stroke="#262430" stroke-width="1.9" stroke-linecap="round"/><path d="M43.2,34.3 L43.9,36.8" stroke="#2a2832" stroke-width="0.9"/><path d="M41.1,44.8 L45.5,41.5" stroke="#262430" stroke-width="1.9" stroke-linecap="round"/><path d="M43.2,43.8 L43.9,46.3" stroke="#2a2832" stroke-width="0.9"/><path d="M41.1,54.3 L45.5,51.0" stroke="#262430" stroke-width="1.9" stroke-linecap="round"/><path d="M43.2,53.3 L43.9,55.8" stroke="#2a2832" stroke-width="0.9"/><path d="M50.6,6.8 L55,3.5" stroke="#262430" stroke-width="1.9" stroke-linecap="round"/><path d="M52.7,5.8 L53.4,8.3" stroke="#2a2832" stroke-width="0.9"/><path d="M50.6,15.7 L55,12.399999999999999" stroke="#262430" stroke-width="1.9" stroke-linecap="round"/><path d="M52.7,14.7 L53.4,17.2" stroke="#2a2832" stroke-width="0.9"/><path d="M50.6,25.8 L55,22.5" stroke="#262430" stroke-width="1.9" stroke-linecap="round"/><path d="M52.7,24.8 L53.4,27.3" stroke="#2a2832" stroke-width="0.9"/><path d="M50.6,35.3 L55,31.999999999999996" stroke="#262430" stroke-width="1.9" stroke-linecap="round"/><path d="M52.7,34.3 L53.4,36.8" stroke="#2a2832" stroke-width="0.9"/><path d="M50.6,44.8 L55,41.5" stroke="#262430" stroke-width="1.9" stroke-linecap="round"/><path d="M52.7,43.8 L53.4,46.3" stroke="#2a2832" stroke-width="0.9"/><path d="M50.6,54.3 L55,51.0" stroke="#262430" stroke-width="1.9" stroke-linecap="round"/><path d="M52.7,53.3 L53.4,55.8" stroke="#2a2832" stroke-width="0.9"/><path d="M60.1,6.8 L64.5,3.5" stroke="#e8e8ee" stroke-width="1.9" stroke-linecap="round"/><path d="M62.2,5.8 L62.9,8.3" stroke="#2a2832" stroke-width="0.9"/><path d="M60.1,15.7 L64.5,12.399999999999999" stroke="#e8e8ee" stroke-width="1.9" stroke-linecap="round"/><path d="M62.2,14.7 L62.9,17.2" stroke="#2a2832" stroke-width="0.9"/><path d="M60.1,25.8 L64.5,22.5" stroke="#e8e8ee" stroke-width="1.9" stroke-linecap="round"/><path d="M62.2,24.8 L62.9,27.3" stroke="#2a2832" stroke-width="0.9"/><path d="M60.1,35.3 L64.5,31.999999999999996" stroke="#e8e8ee" stroke-width="1.9" stroke-linecap="round"/><path d="M62.2,34.3 L62.9,36.8" stroke="#2a2832" stroke-width="0.9"/><path d="M60.1,44.8 L64.5,41.5" stroke="#e8e8ee" stroke-width="1.9" stroke-linecap="round"/><path d="M62.2,43.8 L62.9,46.3" stroke="#2a2832" stroke-width="0.9"/><path d="M60.1,54.3 L64.5,51.0" stroke="#262430" stroke-width="1.9" stroke-linecap="round"/><path d="M62.2,53.3 L62.9,55.8" stroke="#2a2832" stroke-width="0.9"/><path d="M69.6,6.8 L74,3.5" stroke="#262430" stroke-width="1.9" stroke-linecap="round"/><path d="M71.7,5.8 L72.4,8.3" stroke="#2a2832" stroke-width="0.9"/><path d="M69.6,15.7 L74,12.399999999999999" stroke="#262430" stroke-width="1.9" stroke-linecap="round"/><path d="M71.7,14.7 L72.4,17.2" stroke="#2a2832" stroke-width="0.9"/><path d="M69.6,25.8 L74,22.5" stroke="#262430" stroke-width="1.9" stroke-linecap="round"/><path d="M71.7,24.8 L72.4,27.3" stroke="#2a2832" stroke-width="0.9"/><path d="M69.6,35.3 L74,31.999999999999996" stroke="#262430" stroke-width="1.9" stroke-linecap="round"/><path d="M71.7,34.3 L72.4,36.8" stroke="#2a2832" stroke-width="0.9"/><path d="M69.6,44.8 L74,41.5" stroke="#262430" stroke-width="1.9" stroke-linecap="round"/><path d="M71.7,43.8 L72.4,46.3" stroke="#2a2832" stroke-width="0.9"/><path d="M69.6,54.3 L74,51.0" stroke="#e8e8ee" stroke-width="1.9" stroke-linecap="round"/><path d="M71.7,53.3 L72.4,55.8" stroke="#2a2832" stroke-width="0.9"/><path d="M89.1,6.8 L93.5,3.5" stroke="#262430" stroke-width="1.9" stroke-linecap="round"/><path d="M91.2,5.8 L91.9,8.3" stroke="#2a2832" stroke-width="0.9"/><path d="M89.1,15.7 L93.5,12.399999999999999" stroke="#262430" stroke-width="1.9" stroke-linecap="round"/><path d="M91.2,14.7 L91.9,17.2" stroke="#2a2832" stroke-width="0.9"/><path d="M89.1,25.8 L93.5,22.5" stroke="#262430" stroke-width="1.9" stroke-linecap="round"/><path d="M91.2,24.8 L91.9,27.3" stroke="#2a2832" stroke-width="0.9"/><path d="M89.1,35.3 L93.5,31.999999999999996" stroke="#262430" stroke-width="1.9" stroke-linecap="round"/><path d="M91.2,34.3 L91.9,36.8" stroke="#2a2832" stroke-width="0.9"/><path d="M89.1,44.8 L93.5,41.5" stroke="#262430" stroke-width="1.9" stroke-linecap="round"/><path d="M91.2,43.8 L91.9,46.3" stroke="#2a2832" stroke-width="0.9"/><path d="M89.1,54.3 L93.5,51.0" stroke="#e8e8ee" stroke-width="1.9" stroke-linecap="round"/><path d="M91.2,53.3 L91.9,55.8" stroke="#2a2832" stroke-width="0.9"/><path d="M98.6,6.8 L103,3.5" stroke="#262430" stroke-width="1.9" stroke-linecap="round"/><path d="M100.7,5.8 L101.4,8.3" stroke="#2a2832" stroke-width="0.9"/><path d="M98.6,15.7 L103,12.399999999999999" stroke="#262430" stroke-width="1.9" stroke-linecap="round"/><path d="M100.7,14.7 L101.4,17.2" stroke="#2a2832" stroke-width="0.9"/><path d="M98.6,25.8 L103,22.5" stroke="#262430" stroke-width="1.9" stroke-linecap="round"/><path d="M100.7,24.8 L101.4,27.3" stroke="#2a2832" stroke-width="0.9"/><path d="M98.6,35.3 L103,31.999999999999996" stroke="#262430" stroke-width="1.9" stroke-linecap="round"/><path d="M100.7,34.3 L101.4,36.8" stroke="#2a2832" stroke-width="0.9"/><path d="M98.6,44.8 L103,41.5" stroke="#262430" stroke-width="1.9" stroke-linecap="round"/><path d="M100.7,43.8 L101.4,46.3" stroke="#2a2832" stroke-width="0.9"/><path d="M98.6,54.3 L103,51.0" stroke="#262430" stroke-width="1.9" stroke-linecap="round"/><path d="M100.7,53.3 L101.4,55.8" stroke="#2a2832" stroke-width="0.9"/><path d="M108.1,6.8 L112.5,3.5" stroke="#262430" stroke-width="1.9" stroke-linecap="round"/><path d="M110.2,5.8 L110.9,8.3" stroke="#2a2832" stroke-width="0.9"/><path d="M108.1,15.7 L112.5,12.399999999999999" stroke="#262430" stroke-width="1.9" stroke-linecap="round"/><path d="M110.2,14.7 L110.9,17.2" stroke="#2a2832" stroke-width="0.9"/><path d="M108.1,25.8 L112.5,22.5" stroke="#262430" stroke-width="1.9" stroke-linecap="round"/><path d="M110.2,24.8 L110.9,27.3" stroke="#2a2832" stroke-width="0.9"/><path d="M108.1,35.3 L112.5,31.999999999999996" stroke="#262430" stroke-width="1.9" stroke-linecap="round"/><path d="M110.2,34.3 L110.9,36.8" stroke="#2a2832" stroke-width="0.9"/><path d="M108.1,44.8 L112.5,41.5" stroke="#262430" stroke-width="1.9" stroke-linecap="round"/><path d="M110.2,43.8 L110.9,46.3" stroke="#2a2832" stroke-width="0.9"/><path d="M108.1,54.3 L112.5,51.0" stroke="#262430" stroke-width="1.9" stroke-linecap="round"/><path d="M110.2,53.3 L110.9,55.8" stroke="#2a2832" stroke-width="0.9"/><path d="M117.6,6.8 L122,3.5" stroke="#262430" stroke-width="1.9" stroke-linecap="round"/><path d="M119.7,5.8 L120.4,8.3" stroke="#2a2832" stroke-width="0.9"/><path d="M117.6,15.7 L122,12.399999999999999" stroke="#262430" stroke-width="1.9" stroke-linecap="round"/><path d="M119.7,14.7 L120.4,17.2" stroke="#2a2832" stroke-width="0.9"/><path d="M117.6,25.8 L122,22.5" stroke="#262430" stroke-width="1.9" stroke-linecap="round"/><path d="M119.7,24.8 L120.4,27.3" stroke="#2a2832" stroke-width="0.9"/><path d="M117.6,35.3 L122,31.999999999999996" stroke="#262430" stroke-width="1.9" stroke-linecap="round"/><path d="M119.7,34.3 L120.4,36.8" stroke="#2a2832" stroke-width="0.9"/><path d="M117.6,44.8 L122,41.5" stroke="#262430" stroke-width="1.9" stroke-linecap="round"/><path d="M119.7,43.8 L120.4,46.3" stroke="#2a2832" stroke-width="0.9"/><path d="M117.6,54.3 L122,51.0" stroke="#262430" stroke-width="1.9" stroke-linecap="round"/><path d="M119.7,53.3 L120.4,55.8" stroke="#2a2832" stroke-width="0.9"/><path d="M127.1,6.8 L131.5,3.5" stroke="#e8e8ee" stroke-width="1.9" stroke-linecap="round"/><path d="M129.2,5.8 L129.9,8.3" stroke="#2a2832" stroke-width="0.9"/><path d="M127.1,15.7 L131.5,12.399999999999999" stroke="#e8e8ee" stroke-width="1.9" stroke-linecap="round"/><path d="M129.2,14.7 L129.9,17.2" stroke="#2a2832" stroke-width="0.9"/><path d="M127.1,25.8 L131.5,22.5" stroke="#e8e8ee" stroke-width="1.9" stroke-linecap="round"/><path d="M129.2,24.8 L129.9,27.3" stroke="#2a2832" stroke-width="0.9"/><path d="M127.1,35.3 L131.5,31.999999999999996" stroke="#e8e8ee" stroke-width="1.9" stroke-linecap="round"/><path d="M129.2,34.3 L129.9,36.8" stroke="#2a2832" stroke-width="0.9"/><path d="M127.1,44.8 L131.5,41.5" stroke="#e8e8ee" stroke-width="1.9" stroke-linecap="round"/><path d="M129.2,43.8 L129.9,46.3" stroke="#2a2832" stroke-width="0.9"/><path d="M127.1,54.3 L131.5,51.0" stroke="#262430" stroke-width="1.9" stroke-linecap="round"/><path d="M129.2,53.3 L129.9,55.8" stroke="#2a2832" stroke-width="0.9"/><path d="M136.1,6.8 L140.5,3.5" stroke="#262430" stroke-width="1.9" stroke-linecap="round"/><path d="M138.2,5.8 L138.9,8.3" stroke="#2a2832" stroke-width="0.9"/><path d="M136.1,15.7 L140.5,12.399999999999999" stroke="#262430" stroke-width="1.9" stroke-linecap="round"/><path d="M138.2,14.7 L138.9,17.2" stroke="#2a2832" stroke-width="0.9"/><path d="M136.1,25.8 L140.5,22.5" stroke="#262430" stroke-width="1.9" stroke-linecap="round"/><path d="M138.2,24.8 L138.9,27.3" stroke="#2a2832" stroke-width="0.9"/><path d="M136.1,35.3 L140.5,31.999999999999996" stroke="#262430" stroke-width="1.9" stroke-linecap="round"/><path d="M138.2,34.3 L138.9,36.8" stroke="#2a2832" stroke-width="0.9"/><path d="M136.1,44.8 L140.5,41.5" stroke="#262430" stroke-width="1.9" stroke-linecap="round"/><path d="M138.2,43.8 L138.9,46.3" stroke="#2a2832" stroke-width="0.9"/><path d="M136.1,54.3 L140.5,51.0" stroke="#e8e8ee" stroke-width="1.9" stroke-linecap="round"/><path d="M138.2,53.3 L138.9,55.8" stroke="#2a2832" stroke-width="0.9"/><rect x="80.7" y="0" width="9" height="51.6" fill="#3a3850"/><rect x="82" y="1" width="6.5" height="14" fill="#5a6890"/><rect x="82" y="16" width="6.5" height="35" fill="#4a4c70"/><rect x="81" y="4" width="7" height="3" fill="#9ab0d0"/><rect x="81" y="19" width="7" height="3" fill="#9ab0d0"/><rect x="78" y="53" width="14" height="2" fill="#6a5e6a"/><rect x="10" y="57" width="133.5" height="0.9" fill="#2e2630"/><rect x="10.2" y="57" width="1" height="33.5" fill="#9a98a0"/><rect x="76.5" y="61.7" width="16" height="28.8" fill="#2a262c"/><rect x="77.5" y="62.7" width="14" height="27.8" fill="#332e34"/><rect x="30.5" y="69" width="5.5" height="12" fill="#1e1c20"/><rect x="32.5" y="70" width="1.5" height="8" fill="#d8d8d8"/><circle cx="33" cy="67.5" r="1.8" fill="#c8b8a8"/><rect x="31" y="81" width="4.5" height="9.5" fill="#1a181c"/><rect x="41.5" y="69" width="5" height="11" fill="#a08050"/><circle cx="44" cy="67" r="1.8" fill="#d0b080"/><rect x="42" y="80" width="4" height="10.5" fill="#1e1c1e"/><rect x="0" y="88.5" width="143.5" height="2" fill="#6a6068" opacity="0.6"/></svg><div class="a" style="left:1363.00px;top:400.70px;width:146.50px;height:92.50px;border-radius:3.5px;background:#e4e4e4"></div><svg style="left:1364.50px;top:402.20px;overflow:hidden" width="143.50" height="89.50" viewBox="0 0 143.50 89.50" preserveAspectRatio="none"><rect width="143.5" height="89.5" fill="#4a3a28"/><rect x="68" y="25" width="75.5" height="60" fill="#7a8a5a"/><rect x="72" y="36" width="30" height="30" fill="#a89878"/><ellipse cx="82" cy="40" rx="10" ry="6" fill="#8a9a70"/><ellipse cx="112" cy="32" rx="14" ry="9" fill="#5a7a42"/><ellipse cx="133" cy="30" rx="12" ry="12" fill="#4a6e38"/><ellipse cx="134" cy="48" rx="9" ry="9" fill="#7aa858"/><ellipse cx="112" cy="50" rx="10" ry="8" fill="#b8a088"/><ellipse cx="102" cy="58" rx="6" ry="5" fill="#8a6a40"/><rect x="76" y="60" width="45" height="16" fill="#b0aa9c"/><path d="M78,62 L84,76 M95,64 L100,76 M104,62 L108,76" stroke="#6a5a40" stroke-width="1"/><rect x="0" y="34" width="46" height="38" fill="#5a6a3a"/><rect x="0" y="36" width="10" height="26" fill="#9a7a50"/><path d="M2,36 V62 M5,36 V62 M8,36 V62 M0,42 H10 M0,48 H10 M0,54 H10" stroke="#5a4a2a" stroke-width="0.6"/><rect x="0" y="54" width="10" height="12" fill="#4e7a3a"/><rect x="16" y="36" width="14" height="30" fill="#4a6a38"/><rect x="18" y="38" width="10" height="14" fill="#8a7450"/><rect x="33" y="36" width="11" height="30" fill="#6a7a50"/><rect x="35" y="40" width="6" height="18" fill="#a09a88"/><rect x="0" y="64" width="12" height="8" fill="#8a9aa4"/><rect x="11" y="34" width="5" height="40" fill="#3a2c1e"/><rect x="30" y="34" width="3" height="40" fill="#5a4630"/><rect x="44" y="34" width="3.5" height="40" fill="#3a2c1e"/><rect x="47.5" y="28" width="21" height="46" fill="#9a8664"/><rect x="56" y="30" width="6" height="6" fill="#e0c080"/><rect x="57" y="36" width="4" height="3" fill="#3a3028"/><circle cx="58.3" cy="51.9" r="5.8" fill="#1e1e24"/><circle cx="58.3" cy="51.9" r="4.4" fill="#a8b0c0"/><path d="M67,50 H79 M70,50 V78 M72,58 L80,72" stroke="#2a2420" stroke-width="1"/><path d="M0,0 H143.5 V4 L105,14 L70,27 L0,33 Z" fill="#2c2219"/><path d="M50,0 H120 L95,14 L68,26 L40,30 Z" fill="#3e3020" opacity="0.8"/><path d="M70,27 L105,14 L143.5,4 V20 L122,16 L96,26 L74,35 L68,33 Z" fill="#8a6a3c"/><path d="M124,0 H143.5 V18 L122,10 Z" fill="#7a5c34"/><rect x="86.7" y="22" width="5" height="56" fill="#7a5c36"/><rect x="116" y="12" width="7" height="72" fill="#3e2e1e"/><rect x="117" y="12" width="2.5" height="72" fill="#6a5234"/><rect x="135" y="44" width="8.5" height="45.5" fill="#1e2418"/><path d="M0,74 L5,71 L48,67 L58,72 L60,89.5 H0 Z" fill="#c0b4a0"/><ellipse cx="7" cy="84" rx="6" ry="5" fill="#3a3028"/><ellipse cx="14" cy="77" rx="5" ry="4.5" fill="#4a3e32"/><ellipse cx="26" cy="80" rx="5" ry="4" fill="#3a3028"/><ellipse cx="33" cy="73" rx="4" ry="3.5" fill="#2a2420"/><path d="M45,71 L58,74 L57,87 L45,84 Z" fill="#2a2422"/><rect x="56" y="73" width="2" height="14" fill="#e0dcd4"/><rect x="60" y="80" width="17" height="9.5" fill="#8a7038"/><path d="M76,77 L122,84 L122,89.5 L76,89.5 Z" fill="#221e1c"/><path d="M76,76 L124,82 L124,84.5 L76,78 Z" fill="#d8d4cc"/></svg><div class="a" style="left:1513.70px;top:400.70px;width:57.00px;height:92.50px;border-radius:3.5px;background:#e4e4e4"></div><svg style="left:1515.20px;top:402.20px;overflow:hidden" width="54.00" height="89.50" viewBox="0 0 54.00 89.50" preserveAspectRatio="none"><rect width="54" height="90" fill="#7e7a74"/><rect x="0" y="0" width="54" height="52" fill="#a8a49e"/><rect x="0" y="0" width="54" height="20" fill="#b4b0aa"/><rect x="44" y="0" width="10" height="90" fill="#6e6a64"/><rect x="0" y="0" width="54" height="1.5" fill="#2a2624"/><rect x="2" y="1.5" width="22" height="5" fill="#eeece8"/><path d="M0,6 L5,9 L5,17 L0,17 Z" fill="#1e1e1e"/><path d="M30,3 L36,1 L38,8 L32,11 Z" fill="#3a4a3a"/><path d="M35,20 L41,18 L40,22 Z" fill="#3a5a3a"/><rect x="31" y="27" width="13" height="2" fill="#2e2a28"/><circle cx="43" cy="36" r="1.5" fill="#2a2624"/><rect x="0" y="30" width="25" height="24" fill="#e8e6e0"/><circle cx="13" cy="40" r="8.5" fill="#f6f4f0"/><path d="M13,31 V49 M4,40 H22" stroke="#c8c4bc" stroke-width="0.8"/><rect x="11" y="50" width="13" height="4.5" fill="#1e1c1a"/><rect x="0" y="54" width="54" height="5" fill="#6e6a64"/><rect x="1" y="58" width="20" height="32" fill="#221f1d"/><rect x="18" y="72" width="22" height="18" fill="#2a2624"/><ellipse cx="24" cy="77" rx="10" ry="4" fill="#dad2c2"/><rect x="36" y="70" width="18" height="20" fill="#a08868"/><path d="M38,54 L48,51 L50,68 L38,70 Z" fill="#2a2522"/><rect x="48" y="62" width="6" height="22" fill="#d4d0c8"/></svg><div class="a" style="left:1363.10px;top:504.10px;width:146.50px;height:93.10px;border-radius:3.5px;background:#e4e4e4"></div><svg style="left:1364.60px;top:505.60px;overflow:hidden" width="143.50" height="90.10" viewBox="0 0 143.50 90.10" preserveAspectRatio="none"><rect width="143.5" height="90.5" fill="#5e5160"/><rect x="0" y="0" width="143.5" height="57" fill="#5b4e5c"/><rect x="0" y="0" width="4" height="80" fill="#3e3440"/><path d="M2.6,6.8 L7,3.5" stroke="#262430" stroke-width="1.9" stroke-linecap="round"/><path d="M4.7,5.8 L5.4,8.3" stroke="#2a2832" stroke-width="0.9"/><path d="M2.6,15.7 L7,12.399999999999999" stroke="#262430" stroke-width="1.9" stroke-linecap="round"/><path d="M4.7,14.7 L5.4,17.2" stroke="#2a2832" stroke-width="0.9"/><path d="M2.6,25.8 L7,22.5" stroke="#262430" stroke-width="1.9" stroke-linecap="round"/><path d="M4.7,24.8 L5.4,27.3" stroke="#2a2832" stroke-width="0.9"/><path d="M2.6,35.3 L7,31.999999999999996" stroke="#262430" stroke-width="1.9" stroke-linecap="round"/><path d="M4.7,34.3 L5.4,36.8" stroke="#2a2832" stroke-width="0.9"/><path d="M2.6,44.8 L7,41.5" stroke="#262430" stroke-width="1.9" stroke-linecap="round"/><path d="M4.7,43.8 L5.4,46.3" stroke="#2a2832" stroke-width="0.9"/><path d="M2.6,54.3 L7,51.0" stroke="#262430" stroke-width="1.9" stroke-linecap="round"/><path d="M4.7,53.3 L5.4,55.8" stroke="#2a2832" stroke-width="0.9"/><path d="M12.0,6.8 L16.4,3.5" stroke="#262430" stroke-width="1.9" stroke-linecap="round"/><path d="M14.1,5.8 L14.8,8.3" stroke="#2a2832" stroke-width="0.9"/><path d="M12.0,15.7 L16.4,12.399999999999999" stroke="#262430" stroke-width="1.9" stroke-linecap="round"/><path d="M14.1,14.7 L14.8,17.2" stroke="#2a2832" stroke-width="0.9"/><path d="M12.0,25.8 L16.4,22.5" stroke="#262430" stroke-width="1.9" stroke-linecap="round"/><path d="M14.1,24.8 L14.8,27.3" stroke="#2a2832" stroke-width="0.9"/><path d="M12.0,35.3 L16.4,31.999999999999996" stroke="#262430" stroke-width="1.9" stroke-linecap="round"/><path d="M14.1,34.3 L14.8,36.8" stroke="#2a2832" stroke-width="0.9"/><path d="M12.0,44.8 L16.4,41.5" stroke="#262430" stroke-width="1.9" stroke-linecap="round"/><path d="M14.1,43.8 L14.8,46.3" stroke="#2a2832" stroke-width="0.9"/><path d="M12.0,54.3 L16.4,51.0" stroke="#262430" stroke-width="1.9" stroke-linecap="round"/><path d="M14.1,53.3 L14.8,55.8" stroke="#2a2832" stroke-width="0.9"/><path d="M22.1,6.8 L26.5,3.5" stroke="#262430" stroke-width="1.9" stroke-linecap="round"/><path d="M24.2,5.8 L24.9,8.3" stroke="#2a2832" stroke-width="0.9"/><path d="M22.1,15.7 L26.5,12.399999999999999" stroke="#262430" stroke-width="1.9" stroke-linecap="round"/><path d="M24.2,14.7 L24.9,17.2" stroke="#2a2832" stroke-width="0.9"/><path d="M22.1,25.8 L26.5,22.5" stroke="#262430" stroke-width="1.9" stroke-linecap="round"/><path d="M24.2,24.8 L24.9,27.3" stroke="#2a2832" stroke-width="0.9"/><path d="M22.1,35.3 L26.5,31.999999999999996" stroke="#262430" stroke-width="1.9" stroke-linecap="round"/><path d="M24.2,34.3 L24.9,36.8" stroke="#2a2832" stroke-width="0.9"/><path d="M22.1,44.8 L26.5,41.5" stroke="#262430" stroke-width="1.9" stroke-linecap="round"/><path d="M24.2,43.8 L24.9,46.3" stroke="#2a2832" stroke-width="0.9"/><path d="M22.1,54.3 L26.5,51.0" stroke="#262430" stroke-width="1.9" stroke-linecap="round"/><path d="M24.2,53.3 L24.9,55.8" stroke="#2a2832" stroke-width="0.9"/><path d="M31.6,6.8 L36,3.5" stroke="#262430" stroke-width="1.9" stroke-linecap="round"/><path d="M33.7,5.8 L34.4,8.3" stroke="#2a2832" stroke-width="0.9"/><path d="M31.6,15.7 L36,12.399999999999999" stroke="#262430" stroke-width="1.9" stroke-linecap="round"/><path d="M33.7,14.7 L34.4,17.2" stroke="#2a2832" stroke-width="0.9"/><path d="M31.6,25.8 L36,22.5" stroke="#262430" stroke-width="1.9" stroke-linecap="round"/><path d="M33.7,24.8 L34.4,27.3" stroke="#2a2832" stroke-width="0.9"/><path d="M31.6,35.3 L36,31.999999999999996" stroke="#262430" stroke-width="1.9" stroke-linecap="round"/><path d="M33.7,34.3 L34.4,36.8" stroke="#2a2832" stroke-width="0.9"/><path d="M31.6,44.8 L36,41.5" stroke="#262430" stroke-width="1.9" stroke-linecap="round"/><path d="M33.7,43.8 L34.4,46.3" stroke="#2a2832" stroke-width="0.9"/><path d="M31.6,54.3 L36,51.0" stroke="#262430" stroke-width="1.9" stroke-linecap="round"/><path d="M33.7,53.3 L34.4,55.8" stroke="#2a2832" stroke-width="0.9"/><path d="M41.1,6.8 L45.5,3.5" stroke="#262430" stroke-width="1.9" stroke-linecap="round"/><path d="M43.2,5.8 L43.9,8.3" stroke="#2a2832" stroke-width="0.9"/><path d="M41.1,15.7 L45.5,12.399999999999999" stroke="#262430" stroke-width="1.9" stroke-linecap="round"/><path d="M43.2,14.7 L43.9,17.2" stroke="#2a2832" stroke-width="0.9"/><path d="M41.1,25.8 L45.5,22.5" stroke="#262430" stroke-width="1.9" stroke-linecap="round"/><path d="M43.2,24.8 L43.9,27.3" stroke="#2a2832" stroke-width="0.9"/><path d="M41.1,35.3 L45.5,31.999999999999996" stroke="#262430" stroke-width="1.9" stroke-linecap="round"/><path d="M43.2,34.3 L43.9,36.8" stroke="#2a2832" stroke-width="0.9"/><path d="M41.1,44.8 L45.5,41.5" stroke="#262430" stroke-width="1.9" stroke-linecap="round"/><path d="M43.2,43.8 L43.9,46.3" stroke="#2a2832" stroke-width="0.9"/><path d="M41.1,54.3 L45.5,51.0" stroke="#262430" stroke-width="1.9" stroke-linecap="round"/><path d="M43.2,53.3 L43.9,55.8" stroke="#2a2832" stroke-width="0.9"/><path d="M50.6,6.8 L55,3.5" stroke="#262430" stroke-width="1.9" stroke-linecap="round"/><path d="M52.7,5.8 L53.4,8.3" stroke="#2a2832" stroke-width="0.9"/><path d="M50.6,15.7 L55,12.399999999999999" stroke="#262430" stroke-width="1.9" stroke-linecap="round"/><path d="M52.7,14.7 L53.4,17.2" stroke="#2a2832" stroke-width="0.9"/><path d="M50.6,25.8 L55,22.5" stroke="#262430" stroke-width="1.9" stroke-linecap="round"/><path d="M52.7,24.8 L53.4,27.3" stroke="#2a2832" stroke-width="0.9"/><path d="M50.6,35.3 L55,31.999999999999996" stroke="#262430" stroke-width="1.9" stroke-linecap="round"/><path d="M52.7,34.3 L53.4,36.8" stroke="#2a2832" stroke-width="0.9"/><path d="M50.6,44.8 L55,41.5" stroke="#262430" stroke-width="1.9" stroke-linecap="round"/><path d="M52.7,43.8 L53.4,46.3" stroke="#2a2832" stroke-width="0.9"/><path d="M50.6,54.3 L55,51.0" stroke="#262430" stroke-width="1.9" stroke-linecap="round"/><path d="M52.7,53.3 L53.4,55.8" stroke="#2a2832" stroke-width="0.9"/><path d="M60.1,6.8 L64.5,3.5" stroke="#e8e8ee" stroke-width="1.9" stroke-linecap="round"/><path d="M62.2,5.8 L62.9,8.3" stroke="#2a2832" stroke-width="0.9"/><path d="M60.1,15.7 L64.5,12.399999999999999" stroke="#e8e8ee" stroke-width="1.9" stroke-linecap="round"/><path d="M62.2,14.7 L62.9,17.2" stroke="#2a2832" stroke-width="0.9"/><path d="M60.1,25.8 L64.5,22.5" stroke="#e8e8ee" stroke-width="1.9" stroke-linecap="round"/><path d="M62.2,24.8 L62.9,27.3" stroke="#2a2832" stroke-width="0.9"/><path d="M60.1,35.3 L64.5,31.999999999999996" stroke="#e8e8ee" stroke-width="1.9" stroke-linecap="round"/><path d="M62.2,34.3 L62.9,36.8" stroke="#2a2832" stroke-width="0.9"/><path d="M60.1,44.8 L64.5,41.5" stroke="#e8e8ee" stroke-width="1.9" stroke-linecap="round"/><path d="M62.2,43.8 L62.9,46.3" stroke="#2a2832" stroke-width="0.9"/><path d="M60.1,54.3 L64.5,51.0" stroke="#262430" stroke-width="1.9" stroke-linecap="round"/><path d="M62.2,53.3 L62.9,55.8" stroke="#2a2832" stroke-width="0.9"/><path d="M69.6,6.8 L74,3.5" stroke="#262430" stroke-width="1.9" stroke-linecap="round"/><path d="M71.7,5.8 L72.4,8.3" stroke="#2a2832" stroke-width="0.9"/><path d="M69.6,15.7 L74,12.399999999999999" stroke="#262430" stroke-width="1.9" stroke-linecap="round"/><path d="M71.7,14.7 L72.4,17.2" stroke="#2a2832" stroke-width="0.9"/><path d="M69.6,25.8 L74,22.5" stroke="#262430" stroke-width="1.9" stroke-linecap="round"/><path d="M71.7,24.8 L72.4,27.3" stroke="#2a2832" stroke-width="0.9"/><path d="M69.6,35.3 L74,31.999999999999996" stroke="#262430" stroke-width="1.9" stroke-linecap="round"/><path d="M71.7,34.3 L72.4,36.8" stroke="#2a2832" stroke-width="0.9"/><path d="M69.6,44.8 L74,41.5" stroke="#262430" stroke-width="1.9" stroke-linecap="round"/><path d="M71.7,43.8 L72.4,46.3" stroke="#2a2832" stroke-width="0.9"/><path d="M69.6,54.3 L74,51.0" stroke="#e8e8ee" stroke-width="1.9" stroke-linecap="round"/><path d="M71.7,53.3 L72.4,55.8" stroke="#2a2832" stroke-width="0.9"/><path d="M89.1,6.8 L93.5,3.5" stroke="#262430" stroke-width="1.9" stroke-linecap="round"/><path d="M91.2,5.8 L91.9,8.3" stroke="#2a2832" stroke-width="0.9"/><path d="M89.1,15.7 L93.5,12.399999999999999" stroke="#262430" stroke-width="1.9" stroke-linecap="round"/><path d="M91.2,14.7 L91.9,17.2" stroke="#2a2832" stroke-width="0.9"/><path d="M89.1,25.8 L93.5,22.5" stroke="#262430" stroke-width="1.9" stroke-linecap="round"/><path d="M91.2,24.8 L91.9,27.3" stroke="#2a2832" stroke-width="0.9"/><path d="M89.1,35.3 L93.5,31.999999999999996" stroke="#262430" stroke-width="1.9" stroke-linecap="round"/><path d="M91.2,34.3 L91.9,36.8" stroke="#2a2832" stroke-width="0.9"/><path d="M89.1,44.8 L93.5,41.5" stroke="#262430" stroke-width="1.9" stroke-linecap="round"/><path d="M91.2,43.8 L91.9,46.3" stroke="#2a2832" stroke-width="0.9"/><path d="M89.1,54.3 L93.5,51.0" stroke="#e8e8ee" stroke-width="1.9" stroke-linecap="round"/><path d="M91.2,53.3 L91.9,55.8" stroke="#2a2832" stroke-width="0.9"/><path d="M98.6,6.8 L103,3.5" stroke="#262430" stroke-width="1.9" stroke-linecap="round"/><path d="M100.7,5.8 L101.4,8.3" stroke="#2a2832" stroke-width="0.9"/><path d="M98.6,15.7 L103,12.399999999999999" stroke="#262430" stroke-width="1.9" stroke-linecap="round"/><path d="M100.7,14.7 L101.4,17.2" stroke="#2a2832" stroke-width="0.9"/><path d="M98.6,25.8 L103,22.5" stroke="#262430" stroke-width="1.9" stroke-linecap="round"/><path d="M100.7,24.8 L101.4,27.3" stroke="#2a2832" stroke-width="0.9"/><path d="M98.6,35.3 L103,31.999999999999996" stroke="#262430" stroke-width="1.9" stroke-linecap="round"/><path d="M100.7,34.3 L101.4,36.8" stroke="#2a2832" stroke-width="0.9"/><path d="M98.6,44.8 L103,41.5" stroke="#262430" stroke-width="1.9" stroke-linecap="round"/><path d="M100.7,43.8 L101.4,46.3" stroke="#2a2832" stroke-width="0.9"/><path d="M98.6,54.3 L103,51.0" stroke="#262430" stroke-width="1.9" stroke-linecap="round"/><path d="M100.7,53.3 L101.4,55.8" stroke="#2a2832" stroke-width="0.9"/><path d="M108.1,6.8 L112.5,3.5" stroke="#262430" stroke-width="1.9" stroke-linecap="round"/><path d="M110.2,5.8 L110.9,8.3" stroke="#2a2832" stroke-width="0.9"/><path d="M108.1,15.7 L112.5,12.399999999999999" stroke="#262430" stroke-width="1.9" stroke-linecap="round"/><path d="M110.2,14.7 L110.9,17.2" stroke="#2a2832" stroke-width="0.9"/><path d="M108.1,25.8 L112.5,22.5" stroke="#262430" stroke-width="1.9" stroke-linecap="round"/><path d="M110.2,24.8 L110.9,27.3" stroke="#2a2832" stroke-width="0.9"/><path d="M108.1,35.3 L112.5,31.999999999999996" stroke="#262430" stroke-width="1.9" stroke-linecap="round"/><path d="M110.2,34.3 L110.9,36.8" stroke="#2a2832" stroke-width="0.9"/><path d="M108.1,44.8 L112.5,41.5" stroke="#262430" stroke-width="1.9" stroke-linecap="round"/><path d="M110.2,43.8 L110.9,46.3" stroke="#2a2832" stroke-width="0.9"/><path d="M108.1,54.3 L112.5,51.0" stroke="#262430" stroke-width="1.9" stroke-linecap="round"/><path d="M110.2,53.3 L110.9,55.8" stroke="#2a2832" stroke-width="0.9"/><path d="M117.6,6.8 L122,3.5" stroke="#262430" stroke-width="1.9" stroke-linecap="round"/><path d="M119.7,5.8 L120.4,8.3" stroke="#2a2832" stroke-width="0.9"/><path d="M117.6,15.7 L122,12.399999999999999" stroke="#262430" stroke-width="1.9" stroke-linecap="round"/><path d="M119.7,14.7 L120.4,17.2" stroke="#2a2832" stroke-width="0.9"/><path d="M117.6,25.8 L122,22.5" stroke="#262430" stroke-width="1.9" stroke-linecap="round"/><path d="M119.7,24.8 L120.4,27.3" stroke="#2a2832" stroke-width="0.9"/><path d="M117.6,35.3 L122,31.999999999999996" stroke="#262430" stroke-width="1.9" stroke-linecap="round"/><path d="M119.7,34.3 L120.4,36.8" stroke="#2a2832" stroke-width="0.9"/><path d="M117.6,44.8 L122,41.5" stroke="#262430" stroke-width="1.9" stroke-linecap="round"/><path d="M119.7,43.8 L120.4,46.3" stroke="#2a2832" stroke-width="0.9"/><path d="M117.6,54.3 L122,51.0" stroke="#262430" stroke-width="1.9" stroke-linecap="round"/><path d="M119.7,53.3 L120.4,55.8" stroke="#2a2832" stroke-width="0.9"/><path d="M127.1,6.8 L131.5,3.5" stroke="#e8e8ee" stroke-width="1.9" stroke-linecap="round"/><path d="M129.2,5.8 L129.9,8.3" stroke="#2a2832" stroke-width="0.9"/><path d="M127.1,15.7 L131.5,12.399999999999999" stroke="#e8e8ee" stroke-width="1.9" stroke-linecap="round"/><path d="M129.2,14.7 L129.9,17.2" stroke="#2a2832" stroke-width="0.9"/><path d="M127.1,25.8 L131.5,22.5" stroke="#e8e8ee" stroke-width="1.9" stroke-linecap="round"/><path d="M129.2,24.8 L129.9,27.3" stroke="#2a2832" stroke-width="0.9"/><path d="M127.1,35.3 L131.5,31.999999999999996" stroke="#e8e8ee" stroke-width="1.9" stroke-linecap="round"/><path d="M129.2,34.3 L129.9,36.8" stroke="#2a2832" stroke-width="0.9"/><path d="M127.1,44.8 L131.5,41.5" stroke="#e8e8ee" stroke-width="1.9" stroke-linecap="round"/><path d="M129.2,43.8 L129.9,46.3" stroke="#2a2832" stroke-width="0.9"/><path d="M127.1,54.3 L131.5,51.0" stroke="#262430" stroke-width="1.9" stroke-linecap="round"/><path d="M129.2,53.3 L129.9,55.8" stroke="#2a2832" stroke-width="0.9"/><path d="M136.1,6.8 L140.5,3.5" stroke="#262430" stroke-width="1.9" stroke-linecap="round"/><path d="M138.2,5.8 L138.9,8.3" stroke="#2a2832" stroke-width="0.9"/><path d="M136.1,15.7 L140.5,12.399999999999999" stroke="#262430" stroke-width="1.9" stroke-linecap="round"/><path d="M138.2,14.7 L138.9,17.2" stroke="#2a2832" stroke-width="0.9"/><path d="M136.1,25.8 L140.5,22.5" stroke="#262430" stroke-width="1.9" stroke-linecap="round"/><path d="M138.2,24.8 L138.9,27.3" stroke="#2a2832" stroke-width="0.9"/><path d="M136.1,35.3 L140.5,31.999999999999996" stroke="#262430" stroke-width="1.9" stroke-linecap="round"/><path d="M138.2,34.3 L138.9,36.8" stroke="#2a2832" stroke-width="0.9"/><path d="M136.1,44.8 L140.5,41.5" stroke="#262430" stroke-width="1.9" stroke-linecap="round"/><path d="M138.2,43.8 L138.9,46.3" stroke="#2a2832" stroke-width="0.9"/><path d="M136.1,54.3 L140.5,51.0" stroke="#e8e8ee" stroke-width="1.9" stroke-linecap="round"/><path d="M138.2,53.3 L138.9,55.8" stroke="#2a2832" stroke-width="0.9"/><rect x="80.7" y="0" width="9" height="51.6" fill="#3a3850"/><rect x="82" y="1" width="6.5" height="14" fill="#5a6890"/><rect x="82" y="16" width="6.5" height="35" fill="#4a4c70"/><rect x="81" y="4" width="7" height="3" fill="#9ab0d0"/><rect x="81" y="19" width="7" height="3" fill="#9ab0d0"/><rect x="78" y="53" width="14" height="2" fill="#6a5e6a"/><rect x="10" y="57" width="133.5" height="0.9" fill="#2e2630"/><rect x="10.2" y="57" width="1" height="33.5" fill="#9a98a0"/><rect x="76.5" y="61.7" width="16" height="28.8" fill="#2a262c"/><rect x="77.5" y="62.7" width="14" height="27.8" fill="#332e34"/><rect x="30.5" y="69" width="5.5" height="12" fill="#1e1c20"/><rect x="32.5" y="70" width="1.5" height="8" fill="#d8d8d8"/><circle cx="33" cy="67.5" r="1.8" fill="#c8b8a8"/><rect x="31" y="81" width="4.5" height="9.5" fill="#1a181c"/><rect x="41.5" y="69" width="5" height="11" fill="#a08050"/><circle cx="44" cy="67" r="1.8" fill="#d0b080"/><rect x="42" y="80" width="4" height="10.5" fill="#1e1c1e"/><rect x="0" y="88.5" width="143.5" height="2" fill="#6a6068" opacity="0.6"/></svg><div class="a" style="left:1513.80px;top:504.10px;width:57.00px;height:93.10px;border-radius:3.5px;background:#e4e4e4"></div><svg style="left:1515.30px;top:505.60px;overflow:hidden" width="54.00" height="90.10" viewBox="0 0 54.00 90.10" preserveAspectRatio="none"><rect width="54" height="90" fill="#2a221e"/><rect x="0" y="0" width="54" height="34" fill="#241c1a"/><rect x="0" y="32" width="54" height="40" fill="#5a4630"/><rect x="0" y="34" width="11" height="34" fill="#8a7048"/><path d="M2,34 V68 M5,34 V68 M8,34 V68 M0,40 H11 M0,46 H11 M0,52 H11" stroke="#4a3a22" stroke-width="0.6"/><rect x="0" y="52" width="11" height="14" fill="#4e7038"/><rect x="17" y="36" width="13" height="34" fill="#5a6e40"/><rect x="19" y="38" width="9" height="14" fill="#8a7048"/><rect x="18" y="52" width="11" height="16" fill="#3e6030"/><rect x="33" y="36" width="11" height="32" fill="#6a7a58"/><rect x="35" y="40" width="6" height="22" fill="#9a9888"/><rect x="34" y="56" width="9" height="10" fill="#4a6a38"/><rect x="11" y="32" width="6" height="45" fill="#3a2c1e"/><rect x="30" y="32" width="3" height="40" fill="#7a6040"/><rect x="44" y="32" width="4" height="40" fill="#3a2c1e"/><rect x="48" y="30" width="6" height="45" fill="#7a6548"/><rect x="0" y="68" width="8" height="8" fill="#8a9aa0"/><path d="M0,72 L20,70 L50,68 L54,70 V90 H0 Z" fill="#b0a590"/><ellipse cx="6" cy="84" rx="6" ry="5" fill="#3a3028"/><ellipse cx="14" cy="76" rx="5" ry="4.5" fill="#4a3e32"/><ellipse cx="27" cy="78" rx="5" ry="4" fill="#3a3028"/><ellipse cx="32" cy="71" rx="3" ry="3" fill="#2a2420"/><ellipse cx="46" cy="76" rx="4" ry="5" fill="#2a2420"/><rect x="50" y="66" width="1.2" height="20" fill="#222"/></svg><div class="a" style="left:1363.10px;top:607.10px;width:129.50px;height:94.00px;border-radius:3.5px;background:#e4e4e4"></div><svg style="left:1364.60px;top:608.60px;overflow:hidden" width="126.50" height="91.00" viewBox="0 0 126.50 91.00" preserveAspectRatio="none"><defs><linearGradient id="sky" x1="0" y1="0" x2="0" y2="1"><stop offset="0" stop-color="#b8c6d6"/><stop offset="0.3" stop-color="#a4aec0"/><stop offset="0.65" stop-color="#c4c6cc"/><stop offset="1" stop-color="#d2d0cc"/></linearGradient><linearGradient id="sand" x1="0" y1="0" x2="0" y2="1"><stop offset="0" stop-color="#a89a8a"/><stop offset="1" stop-color="#8c7e6e"/></linearGradient></defs><rect width="126.5" height="91" fill="url(#sky)"/><ellipse cx="8" cy="6" rx="12" ry="10" fill="#ece6d6" opacity="0.9"/><ellipse cx="22" cy="14" rx="10" ry="6" fill="#d8d4cc" opacity="0.7"/><ellipse cx="45" cy="8" rx="14" ry="5" fill="#d4d2d0" opacity="0.6"/><ellipse cx="100" cy="9" rx="18" ry="4" fill="#dcdad6" opacity="0.6"/><ellipse cx="55" cy="22" rx="50" ry="9" fill="#929cb0" opacity="0.35"/><rect x="0" y="60" width="126.5" height="12" fill="#8e9cac"/><rect x="0" y="60" width="126.5" height="1.5" fill="#6e7c8c"/><path d="M0,65 H126.5" stroke="#c4ccd6" stroke-width="1.2"/><path d="M70,63.5 H126.5" stroke="#dde0e4" stroke-width="1"/><rect x="0" y="68" width="126.5" height="4" fill="#b8bcc0"/><path d="M0,70 L60,72 L126.5,75 V91 H0 Z" fill="url(#sand)"/><circle cx="1" cy="66" r="0.8" fill="#333"/><circle cx="80" cy="75.5" r="1" fill="#333"/><g stroke="#e4e6ea" fill="none" stroke-width="1.1"><ellipse cx="63" cy="24" rx="8" ry="1.8"/><ellipse cx="93" cy="23" rx="7" ry="1.6"/><ellipse cx="60" cy="28.5" rx="7" ry="1.8"/><ellipse cx="104" cy="28.5" rx="8" ry="1.8"/></g><path d="M60,28.5 L75,27 L88,26 L104,28.5 L88,31.5 L74,31.5 Z" fill="#d8dce4"/><rect x="78" y="30" width="10" height="5" fill="#c8ccd4"/><rect x="80" y="35" width="5" height="4.5" fill="#2a2a2a"/><path d="M73,30 L70.5,44 M91,30 L93,44 M75,31 L74,43 M89,31 L90,43" stroke="#e6e6ea" stroke-width="1.5"/></svg><div class="a" style="left:1497.40px;top:607.80px;width:73.00px;height:92.80px;border-radius:3.5px;background:#e4e4e4"></div><svg style="left:1498.90px;top:609.30px;overflow:hidden" width="70.00" height="89.80" viewBox="0 0 70.00 89.80" preserveAspectRatio="none"><rect width="70" height="90" fill="#1a281a"/><circle cx="22.0" cy="12.2" r="1.4" fill="#243a22"/><circle cx="58.8" cy="6.8" r="1.3" fill="#0e160e"/><circle cx="13.9" cy="6.1" r="1.2" fill="#121c12"/><circle cx="4.7" cy="37.9" r="1.6" fill="#243a22"/><circle cx="68.1" cy="57.3" r="1.3" fill="#243a22"/><circle cx="40.7" cy="35.3" r="1.8" fill="#243a22"/><circle cx="39.2" cy="10.5" r="1.2" fill="#0e160e"/><circle cx="6.7" cy="27.0" r="1.6" fill="#121c12"/><circle cx="5.6" cy="51.7" r="0.9" fill="#243a22"/><circle cx="38.5" cy="3.9" r="0.8" fill="#121c12"/><circle cx="34.7" cy="48.0" r="1.6" fill="#1c2e1c"/><circle cx="41.3" cy="40.6" r="1.0" fill="#121c12"/><circle cx="49.7" cy="20.9" r="1.3" fill="#0e160e"/><circle cx="34.6" cy="30.3" r="1.2" fill="#0e160e"/><circle cx="70.5" cy="9.1" r="1.2" fill="#2c4628"/><circle cx="9.2" cy="44.0" r="0.7" fill="#2f4a2c"/><circle cx="3.7" cy="50.5" r="1.6" fill="#2c4628"/><circle cx="23.2" cy="30.9" r="1.2" fill="#1c2e1c"/><circle cx="3.1" cy="6.8" r="1.0" fill="#2f4a2c"/><circle cx="47.1" cy="3.7" r="1.5" fill="#2f4a2c"/><circle cx="40.8" cy="62.0" r="1.2" fill="#2f4a2c"/><circle cx="26.5" cy="60.9" r="0.7" fill="#1c2e1c"/><circle cx="24.3" cy="55.4" r="1.2" fill="#121c12"/><circle cx="54.8" cy="10.2" r="1.0" fill="#1c2e1c"/><circle cx="65.8" cy="44.7" r="0.9" fill="#1c2e1c"/><circle cx="38.7" cy="81.0" r="1.6" fill="#0e160e"/><circle cx="18.6" cy="37.0" r="1.1" fill="#1c2e1c"/><circle cx="68.9" cy="12.2" r="0.9" fill="#121c12"/><circle cx="46.7" cy="-0.9" r="1.6" fill="#121c12"/><circle cx="17.4" cy="-1.6" r="1.2" fill="#2c4628"/><circle cx="43.1" cy="27.9" r="0.8" fill="#0e160e"/><circle cx="68.3" cy="59.6" r="1.5" fill="#1c2e1c"/><circle cx="64.6" cy="71.3" r="1.7" fill="#0e160e"/><circle cx="27.0" cy="35.5" r="0.8" fill="#2f4a2c"/><circle cx="27.6" cy="15.9" r="1.8" fill="#1c2e1c"/><circle cx="10.0" cy="30.0" r="0.8" fill="#243a22"/><circle cx="39.9" cy="48.4" r="1.7" fill="#0e160e"/><circle cx="-0.1" cy="80.2" r="1.4" fill="#121c12"/><circle cx="44.9" cy="87.8" r="1.4" fill="#1c2e1c"/><circle cx="7.1" cy="77.8" r="1.8" fill="#1c2e1c"/><circle cx="33.5" cy="27.3" r="0.9" fill="#2f4a2c"/><circle cx="23.4" cy="22.9" r="1.6" fill="#121c12"/><circle cx="36.2" cy="17.3" r="1.7" fill="#2c4628"/><circle cx="8.8" cy="49.1" r="0.7" fill="#0e160e"/><circle cx="20.1" cy="58.4" r="0.8" fill="#2c4628"/><circle cx="36.4" cy="83.4" r="1.1" fill="#121c12"/><circle cx="37.4" cy="71.2" r="1.1" fill="#121c12"/><circle cx="43.4" cy="72.1" r="1.5" fill="#121c12"/><circle cx="57.6" cy="74.9" r="1.5" fill="#121c12"/><circle cx="12.8" cy="44.3" r="1.5" fill="#243a22"/><circle cx="56.5" cy="42.4" r="0.9" fill="#0e160e"/><circle cx="68.8" cy="40.0" r="1.7" fill="#2c4628"/><circle cx="68.7" cy="32.3" r="0.9" fill="#121c12"/><circle cx="32.8" cy="29.7" r="1.2" fill="#0e160e"/><circle cx="60.2" cy="43.1" r="1.4" fill="#2f4a2c"/><circle cx="4.3" cy="60.1" r="1.7" fill="#2f4a2c"/><circle cx="53.5" cy="42.9" r="0.9" fill="#2f4a2c"/><circle cx="22.6" cy="73.3" r="1.8" fill="#1c2e1c"/><circle cx="32.3" cy="67.9" r="0.8" fill="#121c12"/><circle cx="10.6" cy="9.9" r="0.9" fill="#1c2e1c"/><circle cx="57.7" cy="11.7" r="1.6" fill="#1c2e1c"/><circle cx="46.6" cy="30.9" r="1.3" fill="#121c12"/><circle cx="-0.4" cy="73.1" r="1.5" fill="#243a22"/><circle cx="37.0" cy="85.8" r="1.2" fill="#121c12"/><circle cx="59.1" cy="17.8" r="1.0" fill="#2c4628"/><circle cx="35.1" cy="69.8" r="1.1" fill="#0e160e"/><circle cx="29.0" cy="10.3" r="1.7" fill="#2c4628"/><circle cx="64.4" cy="60.3" r="1.6" fill="#0e160e"/><circle cx="29.1" cy="84.3" r="1.3" fill="#0e160e"/><circle cx="9.2" cy="46.0" r="1.7" fill="#121c12"/><circle cx="43.0" cy="70.9" r="0.9" fill="#121c12"/><circle cx="33.0" cy="66.2" r="1.3" fill="#2c4628"/><circle cx="48.5" cy="47.9" r="1.2" fill="#243a22"/><circle cx="63.4" cy="3.3" r="0.9" fill="#243a22"/><circle cx="55.1" cy="45.7" r="1.3" fill="#243a22"/><circle cx="30.8" cy="55.6" r="1.3" fill="#0e160e"/><circle cx="12.8" cy="24.1" r="1.3" fill="#1c2e1c"/><circle cx="35.6" cy="21.3" r="1.3" fill="#2c4628"/><circle cx="66.3" cy="81.9" r="0.9" fill="#1c2e1c"/><circle cx="8.1" cy="9.4" r="1.2" fill="#243a22"/><circle cx="47.7" cy="38.3" r="0.9" fill="#2c4628"/><circle cx="56.0" cy="82.3" r="0.9" fill="#2f4a2c"/><circle cx="45.6" cy="32.4" r="1.0" fill="#121c12"/><circle cx="69.6" cy="18.6" r="1.7" fill="#1c2e1c"/><circle cx="63.5" cy="13.3" r="1.4" fill="#121c12"/><circle cx="9.9" cy="38.6" r="1.3" fill="#2c4628"/><circle cx="29.2" cy="31.5" r="0.8" fill="#2c4628"/><circle cx="-0.6" cy="50.1" r="1.2" fill="#243a22"/><circle cx="26.4" cy="46.6" r="1.0" fill="#243a22"/><circle cx="6.4" cy="84.3" r="1.0" fill="#243a22"/><circle cx="4.2" cy="23.6" r="1.7" fill="#121c12"/><circle cx="18.0" cy="10.2" r="1.2" fill="#2f4a2c"/><circle cx="58.6" cy="22.3" r="0.9" fill="#0e160e"/><circle cx="40.2" cy="63.8" r="0.8" fill="#243a22"/><circle cx="57.2" cy="15.2" r="1.7" fill="#2c4628"/><circle cx="67.4" cy="57.6" r="1.6" fill="#243a22"/><circle cx="43.0" cy="18.9" r="1.0" fill="#243a22"/><circle cx="31.6" cy="29.9" r="1.3" fill="#2c4628"/><circle cx="44.0" cy="2.1" r="1.5" fill="#243a22"/><circle cx="69.7" cy="22.6" r="0.9" fill="#2c4628"/><circle cx="44.5" cy="47.9" r="0.9" fill="#1c2e1c"/><circle cx="35.0" cy="14.7" r="1.1" fill="#243a22"/><circle cx="71.6" cy="1.5" r="0.7" fill="#0e160e"/><circle cx="38.8" cy="15.8" r="1.2" fill="#1c2e1c"/><circle cx="5.9" cy="75.0" r="1.2" fill="#1c2e1c"/><circle cx="38.4" cy="81.5" r="1.8" fill="#2c4628"/><circle cx="48.9" cy="90.3" r="1.1" fill="#2f4a2c"/><circle cx="51.9" cy="11.1" r="1.8" fill="#243a22"/><circle cx="59.9" cy="-0.7" r="1.4" fill="#2c4628"/><circle cx="29.9" cy="3.2" r="1.4" fill="#1c2e1c"/><circle cx="62.4" cy="61.0" r="1.0" fill="#121c12"/><circle cx="49.3" cy="2.3" r="0.9" fill="#2c4628"/><circle cx="31.0" cy="22.7" r="1.8" fill="#0e160e"/><circle cx="21.9" cy="1.2" r="1.7" fill="#121c12"/><circle cx="24.4" cy="-1.9" r="1.1" fill="#1c2e1c"/><circle cx="18.6" cy="59.7" r="1.0" fill="#243a22"/><circle cx="4.7" cy="74.8" r="0.9" fill="#0e160e"/><circle cx="1.1" cy="0.1" r="1.0" fill="#121c12"/><circle cx="4.3" cy="88.0" r="1.6" fill="#121c12"/><circle cx="46.7" cy="65.3" r="1.7" fill="#1c2e1c"/><circle cx="54.6" cy="65.7" r="1.2" fill="#2c4628"/><circle cx="51.6" cy="58.5" r="0.7" fill="#2f4a2c"/><circle cx="64.0" cy="57.0" r="1.5" fill="#0e160e"/><circle cx="8.3" cy="47.2" r="1.3" fill="#243a22"/><circle cx="59.2" cy="52.9" r="1.7" fill="#2f4a2c"/><circle cx="68.7" cy="58.4" r="0.8" fill="#243a22"/><circle cx="7.8" cy="31.9" r="0.8" fill="#1c2e1c"/><circle cx="39.3" cy="57.0" r="1.4" fill="#2f4a2c"/><circle cx="16.1" cy="22.8" r="1.2" fill="#243a22"/><circle cx="53.4" cy="45.3" r="1.3" fill="#2f4a2c"/><circle cx="36.9" cy="68.1" r="1.2" fill="#243a22"/><circle cx="60.6" cy="20.1" r="1.5" fill="#121c12"/><circle cx="52.7" cy="89.7" r="1.2" fill="#1c2e1c"/><circle cx="3.7" cy="83.6" r="1.0" fill="#243a22"/><circle cx="43.7" cy="58.4" r="0.8" fill="#121c12"/><circle cx="22.6" cy="59.2" r="1.5" fill="#0e160e"/><circle cx="40.0" cy="-0.8" r="0.8" fill="#2c4628"/><circle cx="70.0" cy="7.4" r="0.9" fill="#1c2e1c"/><circle cx="19.5" cy="46.6" r="1.2" fill="#1c2e1c"/><circle cx="54.8" cy="91.4" r="1.3" fill="#2c4628"/><circle cx="70.4" cy="86.0" r="0.7" fill="#1c2e1c"/><circle cx="3.7" cy="45.6" r="1.8" fill="#2c4628"/><circle cx="26.6" cy="84.2" r="1.7" fill="#243a22"/><circle cx="41.0" cy="11.3" r="1.3" fill="#2c4628"/><circle cx="7.8" cy="75.1" r="1.3" fill="#243a22"/><circle cx="50.0" cy="19.8" r="1.7" fill="#1c2e1c"/><circle cx="27.2" cy="13.0" r="1.7" fill="#2f4a2c"/><circle cx="31.4" cy="26.4" r="0.9" fill="#2c4628"/><circle cx="25.8" cy="9.4" r="1.1" fill="#2c4628"/><circle cx="53.6" cy="76.9" r="0.8" fill="#121c12"/><circle cx="50.8" cy="82.7" r="1.0" fill="#2c4628"/><circle cx="2.8" cy="34.7" r="1.7" fill="#243a22"/><circle cx="24.7" cy="38.2" r="1.0" fill="#243a22"/><circle cx="18.8" cy="2.9" r="1.4" fill="#2f4a2c"/><circle cx="67.2" cy="21.4" r="1.0" fill="#0e160e"/><circle cx="21.4" cy="70.7" r="1.6" fill="#1c2e1c"/><circle cx="63.4" cy="74.3" r="1.4" fill="#0e160e"/><circle cx="38.6" cy="65.6" r="0.8" fill="#2f4a2c"/><circle cx="28.4" cy="55.8" r="0.9" fill="#2c4628"/><circle cx="33.9" cy="83.7" r="1.3" fill="#121c12"/><circle cx="32.9" cy="30.3" r="1.0" fill="#2f4a2c"/><circle cx="52.7" cy="59.4" r="1.1" fill="#121c12"/><circle cx="20.3" cy="50.4" r="1.1" fill="#121c12"/><circle cx="45.6" cy="5.1" r="1.3" fill="#1c2e1c"/><circle cx="38.7" cy="40.6" r="1.1" fill="#1c2e1c"/><circle cx="29.6" cy="49.5" r="1.0" fill="#121c12"/><circle cx="23.3" cy="6.6" r="1.0" fill="#2c4628"/><circle cx="57.9" cy="17.0" r="0.7" fill="#1c2e1c"/><circle cx="26.3" cy="68.1" r="0.9" fill="#2c4628"/><circle cx="23.0" cy="3.8" r="1.0" fill="#2c4628"/><circle cx="7.3" cy="45.3" r="1.4" fill="#121c12"/><circle cx="4.9" cy="82.3" r="1.1" fill="#2f4a2c"/><circle cx="31.0" cy="87.7" r="1.6" fill="#243a22"/><circle cx="7.4" cy="38.0" r="1.5" fill="#1c2e1c"/><circle cx="69.7" cy="44.0" r="0.8" fill="#0e160e"/><circle cx="61.3" cy="89.4" r="1.0" fill="#243a22"/><circle cx="14.6" cy="12.3" r="1.8" fill="#243a22"/><circle cx="67.7" cy="65.8" r="1.4" fill="#1c2e1c"/><circle cx="4.3" cy="71.0" r="0.7" fill="#121c12"/><circle cx="15.2" cy="84.5" r="1.4" fill="#2c4628"/><circle cx="69.2" cy="56.9" r="1.3" fill="#1c2e1c"/><circle cx="49.7" cy="8.5" r="0.8" fill="#0e160e"/><circle cx="67.8" cy="16.0" r="1.0" fill="#0e160e"/><circle cx="-1.9" cy="48.5" r="1.8" fill="#2c4628"/><circle cx="69.0" cy="58.6" r="1.7" fill="#1c2e1c"/><circle cx="36.9" cy="49.4" r="0.7" fill="#1c2e1c"/><circle cx="50.1" cy="26.9" r="0.7" fill="#1c2e1c"/><circle cx="63.5" cy="58.8" r="0.8" fill="#121c12"/><circle cx="47.4" cy="85.0" r="0.9" fill="#243a22"/><circle cx="49.5" cy="65.5" r="1.1" fill="#1c2e1c"/><circle cx="12.7" cy="72.9" r="1.5" fill="#0e160e"/><circle cx="3.0" cy="44.6" r="0.9" fill="#121c12"/><circle cx="15.1" cy="18.8" r="1.5" fill="#2c4628"/><circle cx="6.1" cy="56.6" r="1.4" fill="#121c12"/><circle cx="33.9" cy="83.6" r="0.8" fill="#0e160e"/><circle cx="8.8" cy="35.0" r="0.9" fill="#0e160e"/><circle cx="8.5" cy="2.9" r="0.8" fill="#1c2e1c"/><circle cx="31.3" cy="64.9" r="1.0" fill="#243a22"/><circle cx="71.8" cy="85.6" r="1.1" fill="#121c12"/><circle cx="46.3" cy="47.3" r="1.2" fill="#2c4628"/><circle cx="47.2" cy="33.6" r="1.1" fill="#2c4628"/><circle cx="30.7" cy="8.2" r="0.8" fill="#243a22"/><circle cx="24.0" cy="87.8" r="0.8" fill="#121c12"/><circle cx="26.1" cy="70.3" r="1.0" fill="#1c2e1c"/><circle cx="4.5" cy="64.3" r="0.9" fill="#0e160e"/><circle cx="66.0" cy="16.1" r="1.1" fill="#1c2e1c"/><circle cx="0.2" cy="36.6" r="1.6" fill="#1c2e1c"/><circle cx="1.0" cy="1.3" r="0.8" fill="#243a22"/><circle cx="17.0" cy="68.2" r="1.7" fill="#2c4628"/><circle cx="24.9" cy="29.5" r="1.7" fill="#243a22"/><circle cx="17.4" cy="65.4" r="1.0" fill="#2c4628"/><circle cx="20.0" cy="65.8" r="1.4" fill="#2f4a2c"/><circle cx="68.0" cy="4.1" r="1.6" fill="#243a22"/><circle cx="33.2" cy="87.9" r="1.7" fill="#1c2e1c"/><circle cx="56.4" cy="83.9" r="1.6" fill="#121c12"/><circle cx="66.7" cy="15.2" r="1.6" fill="#2f4a2c"/><circle cx="20.4" cy="63.1" r="0.9" fill="#121c12"/><circle cx="22.3" cy="28.0" r="1.1" fill="#0e160e"/><circle cx="3.8" cy="16.5" r="1.5" fill="#121c12"/><circle cx="28.2" cy="59.1" r="1.2" fill="#0e160e"/><circle cx="22.1" cy="90.1" r="1.7" fill="#243a22"/><circle cx="17.6" cy="5.9" r="0.8" fill="#1c2e1c"/><circle cx="71.1" cy="89.4" r="0.9" fill="#121c12"/><circle cx="28.8" cy="56.3" r="1.4" fill="#2f4a2c"/><circle cx="37.9" cy="70.7" r="1.5" fill="#2c4628"/><circle cx="19.7" cy="51.3" r="1.1" fill="#2f4a2c"/><circle cx="17.3" cy="39.3" r="0.9" fill="#121c12"/><circle cx="9.3" cy="81.1" r="1.3" fill="#2c4628"/><circle cx="2.8" cy="21.7" r="1.0" fill="#0e160e"/><circle cx="15.1" cy="74.0" r="1.4" fill="#243a22"/><circle cx="5.6" cy="42.6" r="1.6" fill="#1c2e1c"/><circle cx="65.7" cy="1.8" r="1.0" fill="#243a22"/><circle cx="1.7" cy="54.4" r="1.6" fill="#121c12"/><circle cx="66.8" cy="33.0" r="1.7" fill="#1c2e1c"/><circle cx="42.6" cy="70.8" r="1.4" fill="#243a22"/><circle cx="5.8" cy="54.0" r="1.4" fill="#121c12"/><circle cx="0.8" cy="30.0" r="0.7" fill="#2c4628"/><circle cx="0.8" cy="66.8" r="1.7" fill="#243a22"/><circle cx="58.6" cy="36.4" r="1.1" fill="#0e160e"/><circle cx="21.1" cy="17.1" r="1.6" fill="#0e160e"/><circle cx="33.8" cy="36.4" r="1.6" fill="#2f4a2c"/><circle cx="38.7" cy="58.1" r="0.8" fill="#121c12"/><circle cx="27.4" cy="23.5" r="1.8" fill="#2f4a2c"/><circle cx="20.8" cy="87.6" r="1.0" fill="#0e160e"/><circle cx="63.4" cy="36.9" r="0.7" fill="#2c4628"/><circle cx="45.7" cy="34.7" r="1.1" fill="#243a22"/><circle cx="30.1" cy="12.7" r="0.8" fill="#243a22"/><circle cx="28.1" cy="81.0" r="1.2" fill="#121c12"/><circle cx="7.6" cy="2.9" r="0.9" fill="#1c2e1c"/><circle cx="4.6" cy="56.5" r="1.1" fill="#0e160e"/><circle cx="10.7" cy="30.7" r="0.9" fill="#121c12"/><circle cx="66.5" cy="8.2" r="1.2" fill="#121c12"/><circle cx="20.3" cy="76.7" r="0.7" fill="#1c2e1c"/><circle cx="21.3" cy="55.1" r="1.4" fill="#243a22"/><circle cx="64.9" cy="56.3" r="1.6" fill="#121c12"/><circle cx="45.4" cy="78.5" r="1.4" fill="#0e160e"/><circle cx="60.6" cy="75.9" r="0.9" fill="#121c12"/><circle cx="1.1" cy="86.2" r="0.9" fill="#2c4628"/><circle cx="7.1" cy="21.2" r="1.5" fill="#121c12"/><circle cx="1.0" cy="50.9" r="1.5" fill="#243a22"/><circle cx="47.4" cy="28.5" r="1.1" fill="#1c2e1c"/><circle cx="38.7" cy="56.9" r="1.0" fill="#1c2e1c"/><circle cx="20.8" cy="21.4" r="1.1" fill="#2c4628"/><circle cx="31.1" cy="39.2" r="0.7" fill="#0e160e"/><circle cx="71.0" cy="41.7" r="1.2" fill="#0e160e"/><circle cx="55.7" cy="41.1" r="0.9" fill="#1c2e1c"/><circle cx="27.6" cy="4.3" r="1.1" fill="#2c4628"/><circle cx="4.8" cy="39.5" r="1.3" fill="#243a22"/><circle cx="1.0" cy="10.2" r="1.7" fill="#2c4628"/><circle cx="55.5" cy="46.1" r="0.8" fill="#0e160e"/><circle cx="64.2" cy="59.4" r="1.6" fill="#243a22"/><circle cx="61.4" cy="91.6" r="1.5" fill="#243a22"/><circle cx="12.3" cy="90.3" r="1.2" fill="#121c12"/><circle cx="48.8" cy="65.8" r="0.9" fill="#2c4628"/><circle cx="43.2" cy="21.7" r="1.1" fill="#0e160e"/><circle cx="18.3" cy="74.7" r="0.9" fill="#0e160e"/><circle cx="69.4" cy="43.1" r="1.4" fill="#0e160e"/><circle cx="35.4" cy="28.0" r="0.7" fill="#121c12"/><circle cx="27.9" cy="57.8" r="1.0" fill="#2c4628"/><circle cx="64.3" cy="13.9" r="1.6" fill="#243a22"/><circle cx="54.9" cy="2.6" r="1.6" fill="#1c2e1c"/><circle cx="39.1" cy="52.5" r="1.7" fill="#243a22"/><circle cx="16.7" cy="48.4" r="1.6" fill="#2f4a2c"/><circle cx="57.0" cy="22.9" r="1.8" fill="#0e160e"/><circle cx="8.8" cy="29.1" r="0.8" fill="#121c12"/><circle cx="11.1" cy="67.9" r="0.8" fill="#0e160e"/><circle cx="16.8" cy="58.1" r="1.8" fill="#0e160e"/><circle cx="66.7" cy="82.2" r="1.5" fill="#2f4a2c"/><circle cx="0.5" cy="12.0" r="1.4" fill="#1c2e1c"/><circle cx="28.9" cy="32.2" r="0.8" fill="#1c2e1c"/><circle cx="14.8" cy="59.4" r="0.7" fill="#243a22"/><circle cx="40.0" cy="26.6" r="1.3" fill="#0e160e"/><circle cx="14.6" cy="52.9" r="1.3" fill="#121c12"/><circle cx="25.1" cy="75.9" r="0.9" fill="#243a22"/><circle cx="67.3" cy="20.9" r="0.9" fill="#243a22"/><circle cx="2.7" cy="11.6" r="1.4" fill="#2c4628"/><circle cx="27.7" cy="22.8" r="0.7" fill="#2f4a2c"/><circle cx="58.7" cy="81.9" r="1.4" fill="#0e160e"/><circle cx="30.8" cy="86.1" r="1.5" fill="#121c12"/><circle cx="10.2" cy="-2.0" r="0.8" fill="#243a22"/><circle cx="28.0" cy="20.3" r="0.8" fill="#243a22"/><circle cx="-1.1" cy="49.8" r="1.7" fill="#121c12"/><circle cx="28.6" cy="46.7" r="1.4" fill="#2f4a2c"/><circle cx="45.5" cy="74.5" r="0.9" fill="#2c4628"/><circle cx="2.7" cy="56.8" r="1.8" fill="#2f4a2c"/><circle cx="55.9" cy="65.2" r="0.7" fill="#1c2e1c"/><circle cx="53.1" cy="41.7" r="1.5" fill="#1c2e1c"/><circle cx="11.0" cy="91.7" r="1.0" fill="#2f4a2c"/><circle cx="0.9" cy="29.5" r="1.5" fill="#2f4a2c"/><circle cx="67.8" cy="22.8" r="0.8" fill="#2f4a2c"/><circle cx="39.0" cy="39.0" r="1.6" fill="#0e160e"/><circle cx="69.9" cy="25.8" r="1.7" fill="#121c12"/><circle cx="4.3" cy="45.7" r="0.9" fill="#121c12"/><circle cx="60.3" cy="17.1" r="0.9" fill="#2c4628"/><circle cx="12.2" cy="34.5" r="1.4" fill="#1c2e1c"/><circle cx="65.2" cy="57.3" r="1.5" fill="#2f4a2c"/><circle cx="60.3" cy="48.4" r="1.2" fill="#0e160e"/><circle cx="49.6" cy="78.6" r="1.2" fill="#2f4a2c"/><circle cx="15.3" cy="81.2" r="1.6" fill="#1c2e1c"/><circle cx="44.1" cy="5.3" r="1.7" fill="#121c12"/><circle cx="0.4" cy="8.5" r="1.4" fill="#121c12"/><circle cx="23.5" cy="11.3" r="0.7" fill="#243a22"/><circle cx="8.2" cy="58.5" r="0.7" fill="#243a22"/><circle cx="52.5" cy="4.2" r="1.3" fill="#2c4628"/><circle cx="12.7" cy="87.7" r="1.3" fill="#2f4a2c"/><circle cx="2.9" cy="79.6" r="1.7" fill="#1c2e1c"/><circle cx="5.9" cy="17.3" r="0.8" fill="#243a22"/><circle cx="68.2" cy="83.6" r="1.5" fill="#243a22"/><circle cx="59.1" cy="57.4" r="1.0" fill="#243a22"/><circle cx="7.8" cy="72.4" r="1.4" fill="#2c4628"/><circle cx="21.6" cy="37.8" r="0.7" fill="#2c4628"/><circle cx="66.8" cy="2.6" r="1.5" fill="#2c4628"/><circle cx="54.9" cy="54.6" r="1.2" fill="#2c4628"/><circle cx="43.8" cy="0.9" r="1.2" fill="#1c2e1c"/><circle cx="36.4" cy="7.2" r="1.2" fill="#243a22"/><circle cx="37.8" cy="18.4" r="1.6" fill="#243a22"/><circle cx="40.5" cy="25.0" r="1.2" fill="#0e160e"/><circle cx="13.0" cy="69.6" r="1.8" fill="#243a22"/><circle cx="23.7" cy="7.0" r="1.5" fill="#121c12"/><circle cx="69.6" cy="53.7" r="1.8" fill="#0e160e"/><circle cx="17.3" cy="86.7" r="1.0" fill="#121c12"/><circle cx="67.4" cy="19.8" r="0.9" fill="#2f4a2c"/><circle cx="54.7" cy="44.1" r="1.8" fill="#0e160e"/><circle cx="56.2" cy="57.0" r="1.1" fill="#1c2e1c"/><circle cx="66.7" cy="81.8" r="1.5" fill="#1c2e1c"/><circle cx="63.7" cy="0.4" r="0.9" fill="#2c4628"/><circle cx="29.7" cy="49.2" r="0.9" fill="#2f4a2c"/><circle cx="15.3" cy="41.3" r="1.3" fill="#2f4a2c"/><circle cx="53.7" cy="58.8" r="1.1" fill="#2c4628"/><circle cx="36.6" cy="79.6" r="1.2" fill="#0e160e"/><circle cx="52.9" cy="13.9" r="1.2" fill="#2c4628"/><circle cx="40.9" cy="9.8" r="1.2" fill="#2f4a2c"/><circle cx="15.6" cy="16.0" r="1.0" fill="#2f4a2c"/><circle cx="59.2" cy="56.0" r="1.5" fill="#121c12"/><circle cx="51.5" cy="54.7" r="1.1" fill="#121c12"/><circle cx="22.3" cy="15.8" r="1.8" fill="#2f4a2c"/><circle cx="71.6" cy="13.5" r="1.4" fill="#121c12"/><circle cx="26.4" cy="90.5" r="1.6" fill="#2f4a2c"/><circle cx="20.0" cy="23.7" r="0.8" fill="#243a22"/><circle cx="18.8" cy="81.2" r="1.2" fill="#243a22"/><circle cx="27.5" cy="72.4" r="1.5" fill="#0e160e"/><circle cx="70.6" cy="25.8" r="0.7" fill="#2c4628"/><circle cx="42.7" cy="36.0" r="1.5" fill="#1c2e1c"/><circle cx="49.9" cy="53.2" r="1.4" fill="#121c12"/><circle cx="47.4" cy="59.3" r="1.7" fill="#2f4a2c"/><circle cx="49.8" cy="78.1" r="1.4" fill="#2f4a2c"/><circle cx="7.2" cy="38.7" r="1.0" fill="#2f4a2c"/><circle cx="5.2" cy="37.4" r="1.6" fill="#2f4a2c"/><circle cx="50.7" cy="12.7" r="1.6" fill="#1c2e1c"/><circle cx="31.7" cy="56.4" r="1.2" fill="#2f4a2c"/><circle cx="46.9" cy="80.1" r="1.7" fill="#2c4628"/><circle cx="55.6" cy="34.5" r="1.2" fill="#243a22"/><circle cx="0.8" cy="49.1" r="0.9" fill="#121c12"/><circle cx="36.4" cy="7.5" r="1.3" fill="#0e160e"/><circle cx="13.2" cy="42.7" r="0.7" fill="#2c4628"/><circle cx="36.6" cy="36.6" r="1.7" fill="#121c12"/><circle cx="71.3" cy="15.3" r="1.3" fill="#243a22"/><circle cx="52.0" cy="55.7" r="1.4" fill="#2c4628"/><circle cx="18.3" cy="35.6" r="0.7" fill="#1c2e1c"/><circle cx="65.7" cy="57.1" r="1.4" fill="#0e160e"/><circle cx="17.6" cy="19.1" r="1.5" fill="#0e160e"/><circle cx="69.9" cy="91.5" r="1.8" fill="#1c2e1c"/><circle cx="13.7" cy="10.2" r="1.6" fill="#2f4a2c"/><circle cx="12.3" cy="58.4" r="1.5" fill="#121c12"/><circle cx="24.1" cy="58.0" r="1.6" fill="#1c2e1c"/><circle cx="32.6" cy="25.7" r="1.3" fill="#121c12"/><circle cx="55.7" cy="42.1" r="1.6" fill="#121c12"/><circle cx="17.8" cy="33.4" r="1.0" fill="#1c2e1c"/><circle cx="48.2" cy="43.3" r="1.6" fill="#2c4628"/><circle cx="24.5" cy="59.5" r="1.1" fill="#1c2e1c"/><circle cx="29.7" cy="57.9" r="1.4" fill="#2c4628"/><circle cx="9.3" cy="26.5" r="1.1" fill="#243a22"/><circle cx="59.3" cy="83.1" r="1.6" fill="#121c12"/><circle cx="37.3" cy="30.4" r="1.3" fill="#2f4a2c"/><circle cx="-1.2" cy="87.5" r="1.4" fill="#2c4628"/><circle cx="43.0" cy="52.4" r="1.6" fill="#121c12"/><circle cx="55.4" cy="30.6" r="0.9" fill="#1c2e1c"/><circle cx="56.6" cy="13.8" r="1.7" fill="#0e160e"/><circle cx="70.3" cy="6.5" r="1.7" fill="#0e160e"/><circle cx="56.3" cy="76.8" r="0.9" fill="#2f4a2c"/><circle cx="13.8" cy="5.4" r="1.6" fill="#2f4a2c"/><circle cx="63.3" cy="50.2" r="1.0" fill="#121c12"/><circle cx="59.2" cy="42.5" r="1.3" fill="#1c2e1c"/><circle cx="32.6" cy="11.6" r="1.2" fill="#1c2e1c"/><circle cx="10.2" cy="54.4" r="1.5" fill="#121c12"/><circle cx="60.2" cy="42.0" r="1.3" fill="#2f4a2c"/><circle cx="20.0" cy="41.8" r="1.2" fill="#2f4a2c"/><circle cx="3.6" cy="57.9" r="1.4" fill="#243a22"/><circle cx="-0.5" cy="2.3" r="1.5" fill="#2c4628"/><circle cx="57.8" cy="6.8" r="1.2" fill="#121c12"/><circle cx="0.5" cy="65.5" r="1.4" fill="#2c4628"/><circle cx="5.0" cy="59.9" r="1.1" fill="#0e160e"/><circle cx="39.0" cy="83.8" r="1.0" fill="#2c4628"/><circle cx="29.3" cy="50.1" r="1.6" fill="#2c4628"/><circle cx="24.3" cy="44.4" r="1.1" fill="#2c4628"/><circle cx="62.6" cy="30.4" r="0.9" fill="#1c2e1c"/><circle cx="56.6" cy="29.1" r="1.0" fill="#2c4628"/><circle cx="7.4" cy="89.4" r="0.8" fill="#243a22"/><circle cx="27.5" cy="50.1" r="1.1" fill="#0e160e"/><circle cx="1.7" cy="26.2" r="0.7" fill="#121c12"/><rect x="0" y="0" width="70" height="1.2" fill="#0e140e"/><path d="M10,22 L16,28 L20,20" stroke="#4a3e3a" stroke-width="1.5" fill="none" opacity="0.6"/><path d="M31,27 Q40,26 47,29 L58,31 L50,33 Q40,31 31,27 Z" fill="#e8e6e0"/><path d="M50,31 L68,33 L69,35 L52,34 Z" fill="#dcdad4"/><path d="M45,31 L52,29 L70,35 V49 L60,49 L50,43 Z" fill="#f4f2ee"/><path d="M58,46 L53,66 L56.5,67 L61,48 Z" fill="#ecebe6"/><rect x="63" y="46" width="7" height="7" fill="#cfcdc7"/><rect x="62" y="58" width="8" height="4" fill="#8a8884"/></svg></div><svg style="left:0;top:0" width="60" height="843"><path d="M13.8,828 H27.4 M20.6,821.4 V835" stroke="#222" stroke-width="1.3"/></svg></body></html>
